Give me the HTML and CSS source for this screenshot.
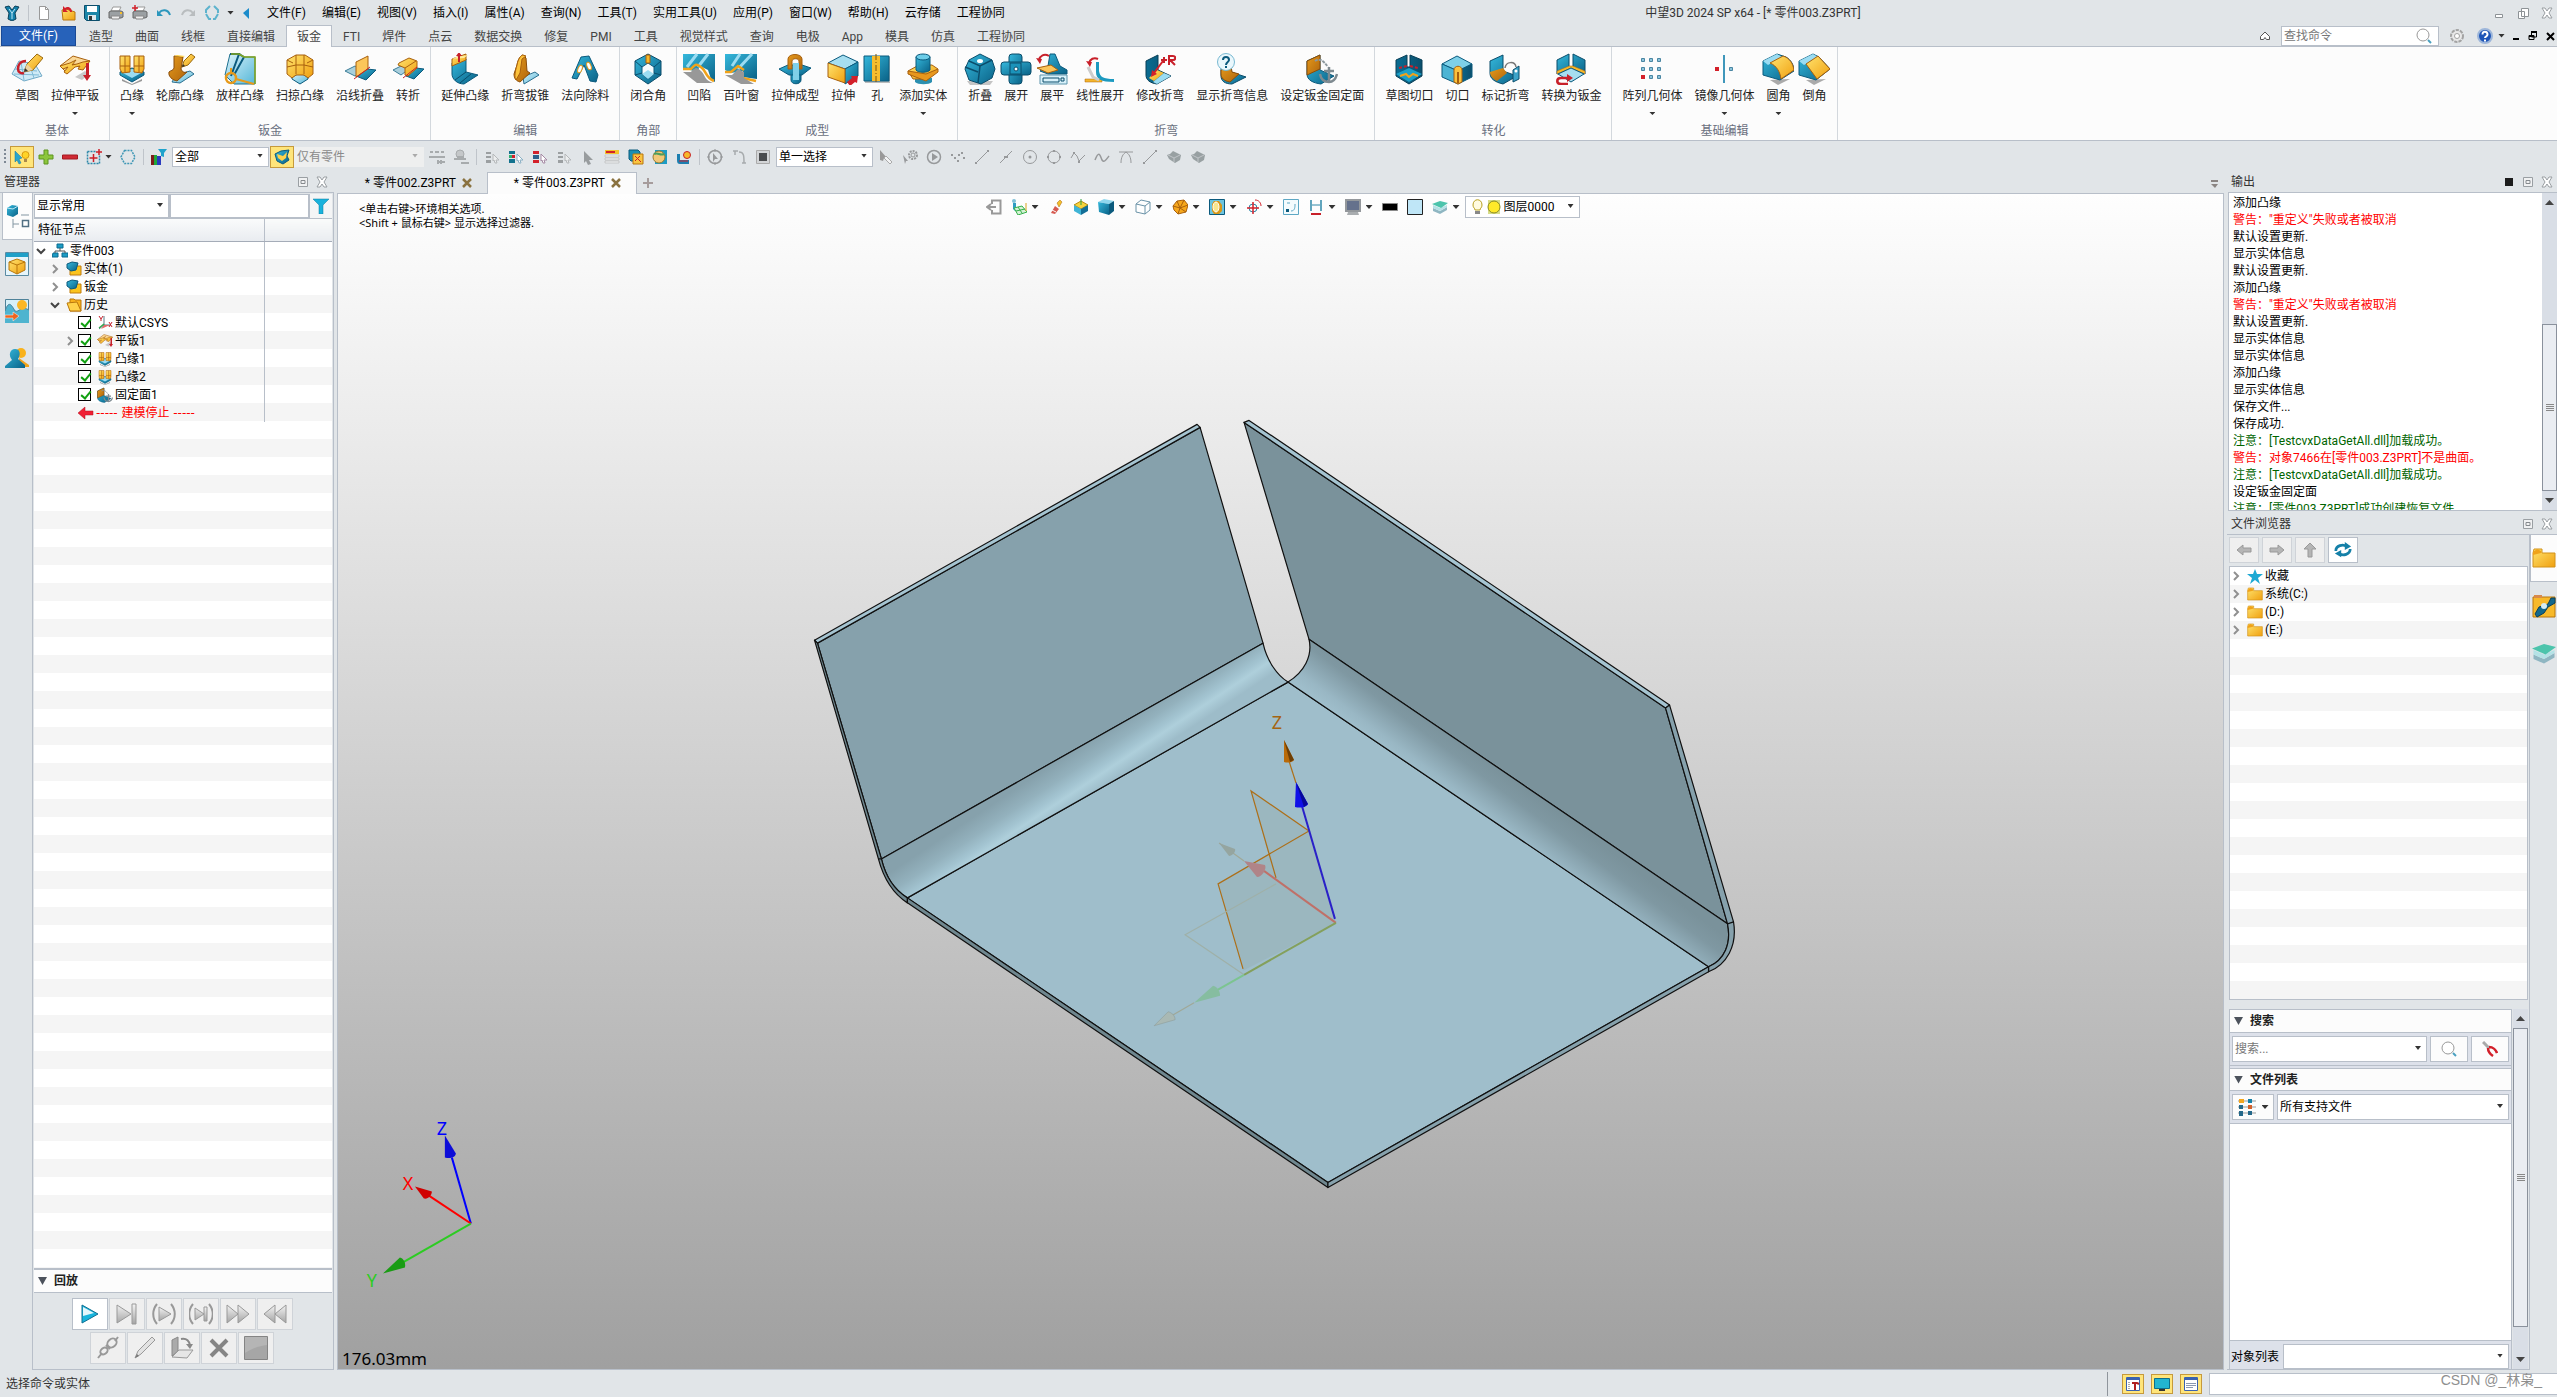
FILE: index.html
```
<!DOCTYPE html>
<html lang="zh-CN">
<head>
    <meta charset="UTF-8">
    <meta name="viewport" content="width=device-width, initial-scale=1.0">
    <title>中望3D 2024 SP x64</title>
    <link rel="stylesheet" href="styles.css">
</head>
<body>
    <!-- icon sprite -->
    <svg class="sprite" width="0" height="0" aria-hidden="true">
        <defs>
            <linearGradient id="gy" x1="0" y1="0" x2="1" y2="1"><stop offset="0" stop-color="#ffe36e"/><stop offset="1" stop-color="#f0a010"/></linearGradient>
            <linearGradient id="go" x1="0" y1="0" x2="1" y2="1"><stop offset="0" stop-color="#e59a1c"/><stop offset="1" stop-color="#b0650c"/></linearGradient>
            <linearGradient id="gb" x1="0" y1="0" x2="1" y2="1"><stop offset="0" stop-color="#35b8dc"/><stop offset="1" stop-color="#0a6287"/></linearGradient>
            <linearGradient id="gd" x1="0" y1="0" x2="1" y2="0"><stop offset="0" stop-color="#0a6c92"/><stop offset="1" stop-color="#0c4f6c"/></linearGradient>
            <linearGradient id="gl" x1="0" y1="0" x2="1" y2="1"><stop offset="0" stop-color="#dcf3fb"/><stop offset="1" stop-color="#55b7d8"/></linearGradient>
            <linearGradient id="gg" x1="0" y1="0" x2="0" y2="1"><stop offset="0" stop-color="#f4f4f4"/><stop offset="1" stop-color="#a4a4a4"/></linearGradient>
        </defs>

        <!-- ribbon icons, 32 units -->
        <symbol id="r-sketch" viewBox="0 0 32 32">
            <path d="M1 21 8 8l16 3 7 12-18 5z" fill="#cfeaf6" stroke="#6fa9c6"/>
            <path d="M4 16l22 2M3 21l25 1M10 9l3 18M18 10l5 15" stroke="#7fbad6" fill="none"/>
            <path d="M15 8c-6 0-8 4-8 8 0 3 3 5 6 4" fill="none" stroke="#c8202a" stroke-width="2.5"/>
            <path d="M13 19l3-8L26 1l6 4-10 12z" fill="url(#gy)" stroke="#9a6a10"/><path d="M13 19l3-8 6 6z" fill="#ecd2a0"/><path d="M13 19l1-4 3 3z" fill="#333"/>
        </symbol>
        <symbol id="r-plate" viewBox="0 0 32 32">
            <path d="M16 24l10-6 4 3-7 6z" fill="#c9c9c9"/>
            <path d="M1 13 14 3l17 5-7 7-4-1-5-3-8 8z" fill="#fbd896" stroke="#a8600e"/>
            <path d="M1 13l10-3 6-3-4 5 5-1 6-2 7-1-7 9-5-1 2-3-5 1-8 7-3-2 4-5-5 2z" fill="url(#gy)" stroke="#a8600e"/>
            <path d="M27 10h3v12h2l-4 6-4-6h3z" fill="#c8202a"/>
        </symbol>
        <symbol id="r-flange" viewBox="0 0 32 32">
            <path d="M6 26l10 5 10-5v2l-10 4-10-4z" fill="#999"/>
            <path d="M4 19l12-4 12 4v3l-12 7-12-7z" fill="url(#gb)" stroke="#0b5a7d"/><path d="M5 19l11-3 11 3-11 6z" fill="#9bdcf2"/>
            <path d="M4 3h10v16l-8 1-2-4z" fill="url(#gy)" stroke="#a8600e"/><path d="M18 3h10v13l-2 4-8-1z" fill="url(#gy)" stroke="#a8600e"/>
            <path d="M9 3v16M4 13h10M23 3v16M18 13h10" stroke="#a8600e" fill="none"/>
        </symbol>
        <symbol id="r-profile" viewBox="0 0 32 32">
            <path d="M12 22l14-4 4 3-14 9-8-1z" fill="url(#gl)" stroke="#2b6f8f"/>
            <path d="M10 3l9 1-2 12c1 3 4 4 6 3l-10 9c-5-1-9-5-8-9 2-2 4-1 5-4z" fill="url(#go)" stroke="#8a4d0a"/>
            <path d="M10 3l3-1 8 1-2 1z" fill="#ffd24a"/>
            <path d="M18 14l2-6 7-7 4 3-7 8z" fill="url(#gy)" stroke="#9a6a10"/><path d="M18 14l1-3 2 2z" fill="#333"/>
        </symbol>
        <symbol id="r-loft" viewBox="0 0 32 32">
            <path d="M6 1h9l5 3h11v27H10L1 22z" fill="url(#gl)" stroke="#1d7090"/><path d="M6 1l9 0-8 22M20 4 10 22M15 1l5 3" fill="none" stroke="#0b5a7d" stroke-width="2"/>
            <path d="M7 1h8l5 3h11v27" fill="none" stroke="#86a81e" stroke-width="1.5"/>
            <circle cx="7" cy="25" r="5" fill="none" stroke="#e79a1a" stroke-width="2.5"/><path d="M7 19v-4M12 26l18 5" stroke="#e79a1a" stroke-width="2"/>
        </symbol>
        <symbol id="r-sweep" viewBox="0 0 32 32">
            <path d="M8 24l8-4 8 4v2l-8 5-8-5z" fill="url(#gl)" stroke="#0b5a7d"/>
            <path d="M3 7l9-5h9l8 5v14l-5 4-4-3h-8l-4 3-5-4z" fill="url(#gy)" stroke="#a8600e"/>
            <path d="M12 2v19M20 2v19M3 14l9-2h8l9 2M3 7l6 3M29 7l-6 3" stroke="#a8600e" fill="none"/>
        </symbol>
        <symbol id="r-linefold" viewBox="0 0 32 32">
            <path d="M1 18l10-5 8 4-8 6z" fill="#a9cfdc" stroke="#3c7e99"/><path d="M12 23l11-7 9 1-10 10z" fill="url(#gb)" stroke="#0b5a7d"/>
            <path d="M12 9l12-6v13l-12 8z" fill="#fcc65a" stroke="#a8600e"/><path d="M10 26l16-12" stroke="#c8202a"/>
        </symbol>
        <symbol id="r-jog" viewBox="0 0 32 32">
            <path d="M1 17l10-5 6 4-8 6z" fill="#a9cfdc" stroke="#3c7e99"/><path d="M14 23l10-8 8 1-10 10z" fill="url(#gb)" stroke="#0b5a7d"/>
            <path d="M7 10l10-5 8 3v7l-9 8-3-1v-7l-7-3z" fill="url(#gy)" stroke="#a8600e"/><path d="M13 15l11-7" stroke="#a8600e"/><path d="M11 25l14-11" stroke="#c8202a"/>
        </symbol>
        <symbol id="r-extend" viewBox="0 0 32 32">
            <path d="M3 10l14-4v13l12 3-14 9c-7 0-12-5-12-10z" fill="url(#gb)" stroke="#0b5a7d"/>
            <path d="M3 6l14-5v6L3 13z" fill="url(#gy)" stroke="#a8600e"/><path d="M3 6l4-2 12-2-4 3z" fill="#ffe99a"/><path d="M9 9V3H7l3-4 3 4h-2v6z" fill="#c8202a"/><path d="M17 19 6 27M22 21l-11 9" stroke="#0b4d6b" fill="none"/>
        </symbol>
        <symbol id="r-taper" viewBox="0 0 32 32">
            <path d="M14 24l12-5 4 3-15 9z" fill="url(#gl)" stroke="#2b6f8f"/>
            <path d="M8 12c1-6 4-10 6-10l3 3 1 13 3 2-10 9c-4-1-6-4-6-8z" fill="url(#go)" stroke="#8a4d0a"/><path d="M8 12c1-6 4-10 6-10l3 1-4 3-2 14-4 7c-2-3-1-8 1-15z" fill="#fcc23c" stroke="#a8600e"/>
        </symbol>
        <symbol id="r-normal" viewBox="0 0 32 32">
            <path d="M3 25 12 4l8-1 9 19-2 7-6-1-6-16-7 14z" fill="url(#gb)" stroke="#0b5a7d"/><ellipse cx="11" cy="16" rx="2" ry="4" transform="rotate(20 11 16)" fill="#fff" stroke="#e79a1a"/><ellipse cx="20" cy="13" rx="2" ry="4" transform="rotate(-20 20 13)" fill="#fff" stroke="#e79a1a"/>
        </symbol>
        <symbol id="r-corner" viewBox="0 0 32 32">
            <path d="M16 1l13 7v14l-13 9L3 22V8z" fill="url(#gb)" stroke="#0b4d6b"/><path d="M16 10l6 4v7l-6 5-6-5v-7z" fill="#f5fbfd" stroke="#0b5a7d"/>
            <path d="M10 21l6-4 6 4-6 5z" fill="#9bdcf2"/><path d="M3 22l7-2M29 22l-7-2M3 8l7 6M29 8l-7 6" stroke="#0b4d6b"/><path d="M14 2h4v8h-4z" fill="#f7b92a" stroke="#a8600e"/>
        </symbol>
        <symbol id="r-dimple" viewBox="0 0 32 32">
            <path d="M0 1h32v28l-4-3-3-9-8-4-3 6-14-4z" fill="url(#gb)"/><path d="M14 1 4 14M25 1 15 14" stroke="#9bdcf2" stroke-width="3"/>
            <path d="M0 16l8 0c5-6 6-5 11-1 5 4 3 9 12 13" fill="none" stroke="#f0a21a" stroke-width="2.5"/><path d="M0 19l8 0c5-6 6-4 10-1 5 5 3 9 12 12H14z" fill="#989898"/>
        </symbol>
        <symbol id="r-louver" viewBox="0 0 32 32">
            <path d="M0 1h32v25l-14-2 0-6-12 2-6-3z" fill="url(#gb)"/><path d="M15 1 7 13M27 1 13 16" stroke="#9bdcf2" stroke-width="3"/>
            <path d="M0 19h6l7-6 6 4M18 25l13 3" fill="none" stroke="#f0a21a" stroke-width="2.5"/><path d="M0 22h7l6-6 6 3v6l10 6H16z" fill="#989898"/>
        </symbol>
        <symbol id="r-form" viewBox="0 0 32 32">
            <path d="M12 14h10v13c0 5-10 5-10 0z" fill="url(#gb)" stroke="#0b5a7d"/><path d="M0 16l9-4h14l9 3-9 7H10z" fill="url(#gb)" stroke="#0b5a7d"/>
            <path d="M9 16V6c0-6 14-6 14 0v10h-3V8c0-3-7-3-7 0v8z" fill="url(#go)" stroke="#a8600e"/><path d="M14 10h6v17h-6z" fill="#7fd0e8"/>
        </symbol>
        <symbol id="r-extrude" viewBox="0 0 32 32">
            <path d="M16 2l15 7-13 7L1 10z" fill="#a6def0" stroke="#0b5a7d"/><path d="M18 16l13-7v14l-13 8z" fill="url(#gb)" stroke="#0b5a7d"/><path d="M1 10l17 6v14L1 24z" fill="url(#gy)" stroke="#a8600e"/><path d="M20 29l5-4-1-2 7 0-1 7-2-1-5 4z" fill="#d3202a"/>
        </symbol>
        <symbol id="r-hole" viewBox="0 0 32 32">
            <path d="M4 4h25v26H4z" fill="#bdbdbd"/><path d="M3 3h25v25H3z" fill="url(#gb)" stroke="#0b5a7d"/><path d="M11 3h8v25h-8z" fill="#f7bd2e"/><path d="M15 1v30" stroke="#7a5208" stroke-dasharray="6 2 1 2"/>
        </symbol>
        <symbol id="r-addbody" viewBox="0 0 32 32">
            <path d="M8 26v3c3 3 14 3 17 0v-4z" fill="#2b8fb0"/><path d="M1 18l11-6h13l6 4-12 10H6z" fill="url(#gy)" stroke="#a8600e"/><path d="M1 18l18 3 12-5v3L19 28 1 21z" fill="#e8971c" stroke="#a8600e"/>
            <path d="M9 4v13c2 3 12 3 14 0V4z" fill="url(#gb)" stroke="#0b5a7d"/><ellipse cx="16" cy="4" rx="7" ry="3" fill="#6ccde8" stroke="#0b5a7d"/>
        </symbol>
        <symbol id="r-fold" viewBox="0 0 32 32">
            <path d="M3 28h26l-3 4H6z" fill="#c4c4c4"/><path d="M16 1l12 6 3 9-3 9-11 6-12-4-4-11 4-9z" fill="url(#gb)" stroke="#0b4d6b"/><path d="M5 8l11 5 12-6M16 13l-2 17M1 14l13 5" fill="none" stroke="#0b4d6b" stroke-width="1.5"/><ellipse cx="16" cy="8" rx="3" ry="2" fill="#fff"/>
        </symbol>
        <symbol id="r-unfold" viewBox="0 0 32 32">
            <rect x="9" y="1" width="13" height="30" rx="3" fill="url(#gb)" stroke="#0b4d6b"/><rect x="1" y="9" width="30" height="13" rx="3" fill="url(#gb)" stroke="#0b4d6b"/><rect x="10" y="10" width="11" height="11" fill="#1b93ba" stroke="#0b4d6b"/><circle cx="16" cy="16" r="2" fill="#fff" stroke="#0b4d6b"/>
        </symbol>
        <symbol id="r-flat" viewBox="0 0 32 32">
            <path d="M14 1h5l5 12 7 4v4H12l-8-3 8-5z" fill="url(#gb)" stroke="#0b5a7d"/><path d="M1 15l14-3 7 5-10 3z" fill="#fcc65a" stroke="#a8600e"/><path d="M13 3C8 0 4 3 3 7" fill="none" stroke="#c8202a" stroke-width="2"/><path d="M0 5l6 1-2 5z" fill="#c8202a"/>
            <path d="M4 22h27v9H4z" fill="#d8f1fa" stroke="#5d94ac"/><path d="M7 25h16v4H7zM25 25h3v3h-3z" fill="none" stroke="#0b4d6b"/>
        </symbol>
        <symbol id="r-linear" viewBox="0 0 32 32">
            <path d="M1 26h17v3H1z" fill="#f5b62c" stroke="#a8600e" stroke-width=".5"/><path d="M15 9v9c1 6 4 8 15 8v3c-13 0-18-3-18-10V9z" fill="#1c9ac0"/><path d="M4 14l5 10 6 3" fill="none" stroke="#ccc" stroke-width="3"/><path d="M14 6C10 4 6 6 5 10" fill="none" stroke="#c8202a" stroke-width="2"/><path d="M2 8l6 1-2 5z" fill="#c8202a"/>
        </symbol>
        <symbol id="r-modbend" viewBox="0 0 32 32">
            <path d="M2 8l12-6v15l13 6-14 8c-7-1-11-4-11-9z" fill="url(#gd)" stroke="#083e56"/><path d="M13 17l7 3-10 8-5-3z" fill="url(#gy)"/><path d="M20 20l7 3-14 8-4-2z" fill="#9bdcf2"/><path d="M19 8l-9 12" stroke="#d3202a" stroke-width="2"/><path d="M7 24l1-7 5 4z" fill="#d3202a"/>
            <path d="M17 7h6M20 4v6M25 12V3h4c3 0 3 4 0 4h-3l5 5" fill="none" stroke="#c8202a" stroke-width="2"/>
        </symbol>
        <symbol id="r-info" viewBox="0 0 32 32">
            <path d="M5 14l10-2v7l15 5-14 7c-7 0-11-3-11-8z" fill="url(#gb)" stroke="#0b4d6b"/><path d="M5 17l10-4 1 6 7 2-9 8c-6-1-9-4-9-8z" fill="url(#go)" stroke="#8a4d0a"/>
            <circle cx="10" cy="9" r="8.500" fill="#eaf7fc" stroke="#79b9d2"/><path d="M7 7c0-4 6-4 6 0 0 2-3 2-3 5M10 13v2" fill="none" stroke="#0b5a7d" stroke-width="2"/>
        </symbol>
        <symbol id="r-anchor" viewBox="0 0 32 32">
            <path d="M1 8l13-6v15l14 6-13 8C7 30 1 27 1 21z" fill="url(#gb)" stroke="#0b5a7d"/><path d="M1 8l13-6v14L1 22z" fill="url(#go)" stroke="#8a4d0a"/>
            <path d="M9 8c4-3 8-1 13 6" fill="none" stroke="#8c989e" stroke-width="2" stroke-dasharray="3 1"/><path d="M23 14v14M18 18h10M14 21c1 6 4 8 9 8s7-4 8-8" fill="none" stroke="#7e8a90" stroke-width="2.500"/>
        </symbol>
        <symbol id="r-skcut" viewBox="0 0 32 32">
            <path d="M3 7l11-5v12h3V2l12 5v16l-13 8-13-8z" fill="url(#gd)" stroke="#083e56"/><path d="M3 21l13-6 13 6-13 8z" fill="#1ba0c8"/><path d="M6 15l8-2M17 13l8 2" stroke="#c8202a" stroke-width="2" stroke-dasharray="3 2"/><path d="M7 23l6-2 3 3 4-3 5 2" fill="none" stroke="#f0a21a" stroke-width="2"/>
        </symbol>
        <symbol id="r-cut" viewBox="0 0 32 32">
            <path d="M16 3l15 8-14 7L1 11z" fill="#7ed0e8" stroke="#0b5a7d"/><path d="M1 11l16 7v13L1 24z" fill="#4cb4d4" stroke="#0b5a7d"/><path d="M17 18l14-7v13l-14 7z" fill="url(#gd)" stroke="#0b5a7d"/><path d="M13 29V17c0-5 8-5 8 0v12l-4 2z" fill="#fcc23c" stroke="#a8600e"/><path d="M17 19v11" stroke="#a8600e" stroke-width="2"/>
        </symbol>
        <symbol id="r-mark" viewBox="0 0 32 32">
            <path d="M1 8l13-6v16l14 5-14 8C6 29 1 26 1 20z" fill="url(#gb)" stroke="#0b4d6b"/><path d="M1 19l13-4 4 5-10 8c-4-2-7-5-7-9z" fill="url(#go)"/><path d="M16 15c1-7 10-7 11-1" fill="none" stroke="#777" stroke-width="1.500"/><path d="M24 17l6-4v13l-6 3z" fill="#3da3c8" stroke="#0b4d6b"/><circle cx="27" cy="18" r="1.500" fill="#fff"/>
        </symbol>
        <symbol id="r-convert" viewBox="0 0 32 32">
            <path d="M2 7l12-6v14L2 21zM18 1l12 6v14l-12-6z" fill="url(#gb)" stroke="#0b4d6b"/><path d="M2 18l12-5h4l12 5v3l-14-6-14 6z" fill="#f7b92a" stroke="#a8600e" stroke-width=".5"/><path d="M3 21l13-6 13 6-13 8z" fill="#a6def0" stroke="#0b5a7d"/>
            <path d="M13 31H6c-5 0-5-6 0-6h7" fill="none" stroke="#c8202a" stroke-width="2.500"/><path d="M12 21l6 4-6 4z" fill="#c8202a"/>
        </symbol>
        <symbol id="r-array" viewBox="0 0 32 32">
            <g fill="#8cc4dc" stroke="#4a86a2"><path d="M5.500 5.500h3v3h-3zM13.500 5.500h3v3h-3zM21.500 5.500h3v3h-3zM5.500 14.500h3v3h-3zM13.500 14.500h3v3h-3zM21.500 14.500h3v3h-3zM13.500 22.500h3v3h-3zM21.500 22.500h3v3h-3z"/></g><path d="M5 22h4v4H5z" fill="#d3202a"/>
        </symbol>
        <symbol id="r-mirror" viewBox="0 0 32 32">
            <path d="M16 2v28" stroke="#3f97bb" stroke-width="2"/><path d="M7 14h4v4H7z" fill="#d3202a"/><path d="M21.500 14.500h3v3h-3z" fill="#8cc4dc" stroke="#4a86a2"/>
        </symbol>
        <symbol id="r-fillet" viewBox="0 0 32 32">
            <path d="M8 27l8 5 12-6z" fill="#aaa"/><path d="M1 8l14-7 9 3c5 3 8 8 8 14l-14 9L1 22z" fill="url(#gb)" stroke="#0b5a7d"/><path d="M15 1 1 8l5 4 14-8z" fill="#9bdcf2"/><path d="M8 10l13-7c7 2 10 8 11 14l-13 9C18 19 15 13 8 10z" fill="url(#gy)" stroke="#a8600e"/>
        </symbol>
        <symbol id="r-chamfer" viewBox="0 0 32 32">
            <path d="M8 27l8 5 12-6z" fill="#aaa"/><path d="M1 8l14-7 6 3 11 12-14 11L1 22z" fill="url(#gb)" stroke="#0b5a7d"/><path d="M15 1 1 8l5 4 14-8z" fill="#9bdcf2"/><path d="M8 11l12-8 12 13-13 10z" fill="url(#gy)" stroke="#a8600e"/>
        </symbol>

        <!-- small icons, 16 units -->
        <symbol id="s-logo" viewBox="0 0 16 16"><path d="M1 2l4-1 3 4 3-4 4 1-4 6 1 6-4 2-4-2 1-6z" fill="#1380ab" stroke="#0a3f58"/><path d="M5 4l3 4 3-4M8 8v6" stroke="#bfe9f7" fill="none"/></symbol>
        <symbol id="s-new" viewBox="0 0 16 16"><path d="M3.500 1.500h6l3 3v10h-9z" fill="#fff" stroke="#999"/><path d="M9.500 1.500v3h3" fill="none" stroke="#999"/></symbol>
        <symbol id="s-open" viewBox="0 0 16 16"><path d="M2 5l4-1 9 3v8H3z" fill="url(#gy)" stroke="#b9770c"/><path d="M12 7c0-5-5-6-7-4l-2-2v6h5L6 5c2-1 4 0 4 2z" fill="#d3202a"/></symbol>
        <symbol id="s-save" viewBox="0 0 16 16"><path d="M.5.5h15v15h-13l-2-2z" fill="#1c86a8" stroke="#0b4d6b"/><path d="M3 1h10v6H3z" fill="#fff"/><path d="M4 10h8v5H4z" fill="#dfe8ec"/><path d="M5 11h3v4H5z" fill="#333"/></symbol>
        <symbol id="s-print" viewBox="0 0 16 16"><path d="M5 2h8l-2 4H3z" fill="#fff" stroke="#999"/><path d="M1 7l2-1h10l2 1v5l-2 1H1z" fill="#9ba0a3" stroke="#666"/><path d="M3 11h9l-1 3H4z" fill="#eee" stroke="#888"/><path d="M12 8h2" stroke="#f7c02e" stroke-width="2"/></symbol>
        <symbol id="s-printp" viewBox="0 0 16 16"><path d="M5 2h8l-2 4H3z" fill="#fff" stroke="#999"/><path d="M1 7l2-1h10l2 1v5l-2 1H1z" fill="#9ba0a3" stroke="#666"/><path d="M3 11h9l-1 3H4z" fill="#eee" stroke="#888"/><path d="M3 0v6M0 3h6" stroke="#d3202a" stroke-width="1.500"/></symbol>
        <symbol id="s-undo" viewBox="0 0 16 16"><path d="M3 8c3-4 9-4 11 2" fill="none" stroke="#2c97bd" stroke-width="2"/><path d="M1 5v6h6z" fill="#2c97bd"/></symbol>
        <symbol id="s-redo" viewBox="0 0 16 16"><path d="M13 8C10 4 4 4 2 10" fill="none" stroke="#b9bdbf" stroke-width="2"/><path d="M15 5v6H9z" fill="#b9bdbf"/></symbol>
        <symbol id="s-regen" viewBox="0 0 16 16"><path d="M6 1 2 5v3M10 1l4 4v3M2 9l3 5h2M14 9l-3 5H9" fill="none" stroke="#5db3cd" stroke-width="2"/></symbol>
        <symbol id="s-left" viewBox="0 0 16 16"><path d="M11 3v11L5 8z" fill="#1c8ccb"/></symbol>
        <symbol id="s-bulb" viewBox="0 0 16 16"><path d="M1 2l7 7-3 1 2 4-2 1-2-4-2 2z" fill="#27a5cc" stroke="#1374a0" stroke-width=".5"/><circle cx="11.500" cy="6" r="3.500" fill="#ffd426" stroke="#d99b10"/><path d="M10 10h3v3h-3z" fill="#a9884a"/></symbol>
        <symbol id="s-plus" viewBox="0 0 16 16"><path d="M6 1h4v5h5v4h-5v5H6v-5H1V6h5z" fill="#8cc63c" stroke="#5c9420"/></symbol>
        <symbol id="s-minus" viewBox="0 0 16 16"><path d="M.5 6h15v4H.5z" fill="#d02a34" stroke="#a31a22"/></symbol>
        <symbol id="s-pick" viewBox="0 0 16 16"><path d="M1.500 2.500h9M1.500 2.500v12h12v-9" fill="none" stroke="#2e88a8" stroke-width="1.500" stroke-dasharray="2 1"/><path d="M7.500 5v8M3.500 9h8M13 0v6M10 3h6" stroke="#cc1f28" stroke-width="1.500"/></symbol>
        <symbol id="s-hex" viewBox="0 0 16 16"><path d="M4.500 1.500h7L15 8l-3.500 6.500h-7L1 8z" fill="none" stroke="#3f97b5" stroke-width="1.500" stroke-dasharray="2 1"/></symbol>
        <symbol id="s-filter" viewBox="0 0 16 16"><path d="M0 6h3v10H0z" fill="#7d1c1c"/><path d="M3 6h3v10H3z" fill="#20a83a"/><path d="M6 7h4v9H6z" fill="#2a3bbf"/><path d="M7 0h9l-3 4v4l-3-1V4z" fill="#1fa3cc"/></symbol>
        <symbol id="s-part" viewBox="0 0 16 16"><path d="M1 5l6-3 8-1-2 6 2 4-6 4-6-3z" fill="url(#gb)" stroke="#0b5a7d"/><path d="M3 5l6 2 4-4-1 6-4 3-4-3z" fill="#ffd24a"/></symbol>
        <symbol id="s-links" viewBox="0 0 16 16"><path d="M1 3h3M6 3h4M12 3h3M0 8h16M8 13h8M9 11v4M12 11v4" stroke="#a7abad" stroke-width="2" fill="none"/></symbol>
        <symbol id="s-stamp" viewBox="0 0 16 16"><circle cx="7" cy="5" r="4" fill="#c4c7c9" stroke="#a7abad"/><path d="M1 10h12M8 14h8M4 8h7" stroke="#a7abad" stroke-width="2"/></symbol>
        <symbol id="s-lista" viewBox="0 0 16 16"><path d="M2 3h5v2H2zM2 7h5v2H2zM2 11h5v3H2z" fill="#9b9fa1"/><path d="M9 5l6 6-3 0 1 3-2 0-1-3-1 1z" fill="#eceeef" stroke="#b5b8ba"/></symbol>
        <symbol id="s-listb" viewBox="0 0 16 16"><path d="M1 2h6v3H1zM1 10h6v4H1z" fill="#12728e"/><path d="M4 6h3v3H4z" fill="#d3202a"/><path d="M1 6h3v3H1z" fill="#30b070"/><path d="M9 5l6 6-3 0 1 3-2 0-1-3-1 1z" fill="#fff" stroke="#8ab0c4"/></symbol>
        <symbol id="s-listc" viewBox="0 0 16 16"><path d="M1 2h6v3H1zM1 11h6v3H1z" fill="#d3202a"/><path d="M1 6h6v4H1z" fill="#2d5f8a"/><path d="M9 5l6 6-3 0 1 3-2 0-1-3-1 1z" fill="#fff" stroke="#a58aa4"/></symbol>
        <symbol id="s-cursor" viewBox="0 0 16 16"><path d="M4 2l9 9-4 0 2 4-3 1-2-4-2 2z" fill="#989c9e"/></symbol>
        <symbol id="s-layers" viewBox="0 0 16 16"><path d="M1 1h14v4H1z" fill="#f4c22c"/><path d="M2 3h9" stroke="#d3202a" stroke-width="2"/><path d="M1 6h14v2H1zM1 9h14v2H1zM1 12h14v2H1z" fill="#eceeef" stroke="#aaa" stroke-width=".5"/></symbol>
        <symbol id="s-boxes" viewBox="0 0 16 16"><path d="M1 1h9l2 2v9H3l-2-2z" fill="#1c8fb2" stroke="#0b5a7d"/><path d="M5 5h10v10H5z" fill="#f9c440" stroke="#b9770c"/><path d="M7 7l6 6M12 7l-5 5" stroke="#c8202a"/></symbol>
        <symbol id="s-globe" viewBox="0 0 16 16"><path d="M3 1h12v14H3z" fill="#1c9cc4"/><circle cx="7" cy="8" r="6" fill="#f2c878" stroke="#9a7a30"/><path d="M2 5c4-2 6 2 10 0" stroke="#4b9d5c" stroke-width="2" fill="none"/></symbol>
        <symbol id="s-bendset" viewBox="0 0 16 16"><path d="M1 5h3v6h9v4H4c-2 0-3-1-3-4z" fill="#1c7fb0"/><circle cx="11" cy="6" r="3.500" fill="#f7b92a" stroke="#c8202a"/><path d="M3 12h9" stroke="#d3202a"/></symbol>
        <symbol id="s-target" viewBox="0 0 16 16"><circle cx="8" cy="8" r="6.500" fill="none" stroke="#97999b" stroke-width="1.500"/><path d="M8 0v3M8 13v3M0 8h3M13 8h3" stroke="#97999b"/><path d="M6 4l5 6H8l-2 3z" fill="#97999b"/></symbol>
        <symbol id="s-snap" viewBox="0 0 16 16"><path d="M2 2h5M4 2v4M8 3c5 0 5 4 5 11M11 14h4" fill="none" stroke="#a7abad" stroke-width="1.500"/></symbol>
        <symbol id="s-square" viewBox="0 0 16 16"><path d="M1.500 1.500h13v13h-13z" fill="#d3d5d7" stroke="#aaa"/><path d="M4 4h8v8H4z" fill="#4a4c4e"/></symbol>
        <symbol id="s-erase" viewBox="0 0 16 16"><path d="M2 1l7 8-3 0-1 3-3-1z" fill="#999"/><path d="M8 7l6 6-2 2-6-6z" fill="#f2f3f4" stroke="#aaa"/></symbol>
        <symbol id="s-gear" viewBox="0 0 16 16"><circle cx="11" cy="6" r="4" fill="none" stroke="#97999b" stroke-width="2" stroke-dasharray="2 1"/><circle cx="11" cy="6" r="2" fill="none" stroke="#97999b"/><path d="M1 6l5 6H4l-1 3z" fill="#97999b"/></symbol>
        <symbol id="s-play" viewBox="0 0 16 16"><circle cx="8" cy="8" r="6.500" fill="none" stroke="#97999b" stroke-width="1.500"/><path d="M6 4l6 4-6 4z" fill="#97999b"/></symbol>
        <symbol id="s-dots" viewBox="0 0 16 16"><path d="M1 6h2M4 9h2M8 6h2M7 12h2M11 4h2M13 9h2" stroke="#97999b" stroke-width="2"/></symbol>
        <symbol id="s-line" viewBox="0 0 16 16"><path d="M2 14 14 2" stroke="#97999b"/><path d="M1 13h2v2H1zM13 1h2v2h-2z" fill="#97999b"/></symbol>
        <symbol id="s-line2" viewBox="0 0 16 16"><path d="M2 14 14 2" stroke="#97999b"/><path d="M6 7h4v2H6z" fill="#97999b"/></symbol>
        <symbol id="s-circdot" viewBox="0 0 16 16"><circle cx="8" cy="8" r="6.500" fill="none" stroke="#97999b"/><circle cx="8" cy="8" r="1.500" fill="#97999b"/></symbol>
        <symbol id="s-circ" viewBox="0 0 16 16"><circle cx="8" cy="8" r="6" fill="none" stroke="#97999b"/><path d="M7 1h2v2H7zM7 13h2v2H7zM1 7h2v2H1zM13 7h2v2h-2z" fill="#97999b"/></symbol>
        <symbol id="s-wave" viewBox="0 0 16 16"><path d="M1 9l3-5 3 3 2 5 3-3 3-3" fill="none" stroke="#97999b"/><path d="M3 3h2v2H3zM8 12h2v2H8z" fill="#97999b"/></symbol>
        <symbol id="s-wave2" viewBox="0 0 16 16"><path d="M1 11c4-10 5-5 7 0 2 3 4 0 7-4" fill="none" stroke="#97999b" stroke-width="1.500"/></symbol>
        <symbol id="s-arc" viewBox="0 0 16 16"><path d="M1 3h14M3 14c0-6 2-9 5-11 3 2 5 5 5 11" fill="none" stroke="#97999b"/></symbol>
        <symbol id="s-cube3" viewBox="0 0 16 16"><path d="M1 6l3-1 3-3 4 2 4 2-1 5-5 3-6-4z" fill="#98a0a2"/><path d="M2 6l6 3 6-3M8 9v4" stroke="#c0c5c8" fill="none"/></symbol>

        <symbol id="s-exit" viewBox="0 0 16 16"><path d="M6 5V1.500h8.500v13H6V11" fill="none" stroke="#999" stroke-width="2"/><path d="M10 8H2M5 5 1 8l4 3" fill="none" stroke="#999" stroke-width="2"/></symbol>
        <symbol id="s-csgrid" viewBox="0 0 16 16"><circle cx="3" cy="2" r="2" fill="#7fc0d8"/><path d="M2 4h3v6l2 2-3 0-2-2z" fill="#2e9dc2"/><path d="M3 9l8-2 5 6-9 3z" fill="#d6f2d6" stroke="#34b04a"/><path d="M5 12l9-2M7 8l4 6" stroke="#34b04a"/><path d="M15 4v8" stroke="#d9a520"/></symbol>
        <symbol id="s-brush" viewBox="0 0 16 16"><path d="M9 4l3-3 2 2-3 5z" fill="#f4c22c" stroke="#a8600e" stroke-width=".5"/><path d="M7 7l4 3-4 5-4-1z" fill="#d65a50"/><path d="M4 11l4 2" stroke="#fff"/></symbol>
        <symbol id="s-block" viewBox="0 0 16 16"><path d="M8 2l7 4-7 4-7-4z" fill="#f6d33c" stroke="#b98a10"/><path d="M1 6l7 4v6l-7-4z" fill="#3fb4d6"/><path d="M8 10l7-4v6l-7 4z" fill="#136f97"/><path d="M8 0v6" stroke="#30a040"/></symbol>
        <symbol id="s-cube" viewBox="0 0 16 16"><path d="M6 0l10 2-5 3L0 3z" fill="#8fd7ee"/><path d="M0 3l11 2v11L1 13z" fill="url(#gb)"/><path d="M11 5l5-3v10l-5 4z" fill="#0b5a7d"/></symbol>
        <symbol id="s-wire" viewBox="0 0 16 16"><path d="M6 1l9 2v8l-5 4-9-2V5zM1 5l9 2 5-4M10 7v8" fill="#fff" stroke="#6b93a8"/></symbol>
        <symbol id="s-poly" viewBox="0 0 16 16"><path d="M1 7l4-5 7-1 4 5-2 7-8 2-4-4z" fill="#f7a81c" stroke="#a8600e"/><path d="M1 7l7 2 8-3M8 9l4-8M8 9l-2 6M8 9l6 4M5 2l3 7" stroke="#a8600e" fill="none"/></symbol>
        <symbol id="s-section" viewBox="0 0 16 16"><path d="M.5.5h15v15H.5z" fill="#6cc4e0" stroke="#0b5a7d"/><path d="M5 2h5l3 4v6l-3 3H5l-2-3V5z" fill="#d99818"/><ellipse cx="7" cy="8" rx="3" ry="5" fill="#f9e68e" stroke="#fff"/></symbol>
        <symbol id="s-snapax" viewBox="0 0 16 16"><circle cx="7" cy="9" r="4" fill="none" stroke="#2e88a8"/><path d="M7 3v12M1 9h12" stroke="#d3202a" stroke-width="1.500"/><path d="M9 1c4 0 6 3 6 6" fill="none" stroke="#d3202a"/></symbol>
        <symbol id="s-view" viewBox="0 0 16 16"><path d="M.5.5h15v15H.5z" fill="#f4fbfd" stroke="#5da7c4"/><path d="M3 10h3v3H3z" fill="#0b5a7d"/><path d="M8 12c4 0 4-4 4-7M4 4h3" fill="none" stroke="#5da7c4"/></symbol>
        <symbol id="s-dim" viewBox="0 0 16 16"><path d="M3 1v11M13 1v11" stroke="#2e88a8" stroke-width="1.500"/><path d="M4 6h8" stroke="#2e88a8"/><path d="M3 15h10" stroke="#c8202a" stroke-width="2"/></symbol>
        <symbol id="s-monitor" viewBox="0 0 16 16"><path d="M0 0h16v13H0z" fill="#94989c"/><path d="M2 2h12v9H2z" fill="#65718c"/><path d="M3 13h10l1 3H2z" fill="#a9adb0"/></symbol>
        <symbol id="s-black" viewBox="0 0 16 16"><path d="M.5 4.500h15v7H.5z" fill="#000" stroke="#888"/></symbol>
        <symbol id="s-blue" viewBox="0 0 16 16"><path d="M.5.5h15v15H.5z" fill="#bfe6f7" stroke="#222"/></symbol>
        <symbol id="s-stack" viewBox="0 0 16 16"><path d="M1 9l7 3 7-4v3l-7 4-7-3z" fill="#8fb6c2"/><path d="M1 6l7 3 7-3v2l-7 4-7-3z" fill="#b4e2e6"/><path d="M0 5l8-3 8 2-7 5z" fill="#4cc4ac"/></symbol>

        <symbol id="s-pin" viewBox="0 0 12 12"><path d="M1.500 1.500h9v9h-9z" fill="#f0f1f2" stroke="#9a9fa3"/><path d="M4 4.500h4v3H4z" fill="none" stroke="#85898d"/></symbol>
        <symbol id="s-close" viewBox="0 0 12 12"><path d="M1 1h3l2 3 2-3h3L8 6l3 5H8L6 8l-2 3H1l3-5z" fill="#fff" stroke="#9a9fa3"/></symbol>
        <symbol id="s-right" viewBox="0 0 10 10"><path d="M3 1l4 4-4 4" fill="none" stroke="#909090" stroke-width="2"/></symbol>
        <symbol id="s-down" viewBox="0 0 10 10"><path d="M1 3l4 4 4-4" fill="none" stroke="#444" stroke-width="2"/></symbol>
        <symbol id="s-tab-x" viewBox="0 0 12 12"><path d="M2 2l8 8M10 2l-8 8" stroke="#8a7240" stroke-width="2.500"/></symbol>
        <symbol id="s-funnel" viewBox="0 0 16 16"><path d="M0 1h16l-6 6v9H6V7z" fill="#19b2dc" stroke="#0d7ca0" stroke-width=".5"/></symbol>
        <symbol id="s-lens" viewBox="0 0 16 16"><circle cx="7" cy="7" r="6" fill="#fff" stroke="#999"/><path d="M12 12l3 3" stroke="#4aa0c0" stroke-width="2"/></symbol>
        <symbol id="s-assy" viewBox="0 0 16 16"><path d="M5 1h6v4H5zM1 10h5v4H0zM10 10h6v4h-6z" fill="#1c9cc4" stroke="#0b6a90"/><path d="M8 5v3M3 10V8h10v2" fill="none" stroke="#555"/></symbol>
        <symbol id="s-solid" viewBox="0 0 16 16"><path d="M4 5h11v9H4z" fill="#fbc41e" stroke="#c07d10"/><path d="M1 3l5-2 6 1-2 7-5 1-4-3z" fill="url(#gb)" stroke="#0b5a7d"/></symbol>
        <symbol id="s-hist" viewBox="0 0 16 16"><path d="M4 4V2h4l1 1h6v11H4z" fill="#f9b21c" stroke="#b9770c"/><path d="M1 6l10-1 4 9H4z" fill="#ffd24a" stroke="#b9770c"/></symbol>
        <symbol id="s-csys" viewBox="0 0 16 16"><path d="M7 1v9l7 0M7 10l-5 4" fill="none" stroke="#5a7d88"/><path d="M7 10l-3 4 9-4z" fill="#e26a6a"/><path d="M2 1l2 3 2-3M4 4v2M12 7l3 5M15 7l-3 5" stroke="#c8202a" fill="none"/><path d="M2 13l5-4" stroke="#2fa84a" stroke-width="1.500"/></symbol>
        <symbol id="s-stop" viewBox="0 0 16 16"><path d="M0 8l7-6v4h8v4H7v4z" fill="#f01f34" stroke="#b0101f" stroke-width=".5"/></symbol>
        <symbol id="s-folder" viewBox="0 0 24 20"><path d="M1 5l1-4h8v4h13v14H1z" fill="url(#gy)" stroke="#d2921a"/><path d="M1 7V4l4-3 4 2v2z" fill="#f0a21a"/></symbol>
        <symbol id="s-star" viewBox="0 0 16 16"><path d="M8 1l2 5 6 0-5 4 2 6-5-4-5 4 2-6-5-4h6z" fill="#1ea9d4"/></symbol>
        <symbol id="s-back" viewBox="0 0 16 16"><path d="M1 8l6-5v3h8v4H7v3z" fill="#b5b5b5" stroke="#999"/></symbol>
        <symbol id="s-fwd" viewBox="0 0 16 16"><path d="M15 8 9 3v3H1v4h8v3z" fill="#b5b5b5" stroke="#999"/></symbol>
        <symbol id="s-up" viewBox="0 0 16 16"><path d="M8 1l6 6h-4v8H6V7H2z" fill="#b5b5b5" stroke="#999"/></symbol>
        <symbol id="s-sync" viewBox="0 0 20 18"><path d="M2 10c0-6 8-8 12-5M18 8c0 6-8 8-12 5" fill="none" stroke="#1480a8" stroke-width="3"/><path d="M12 0l7 5-7 4zM8 9v8l-7-4z" fill="#1480a8"/></symbol>
        <symbol id="s-tool" viewBox="0 0 16 16"><path d="M1 1l6 6" stroke="#a9a9a9" stroke-width="3"/><path d="M7 6c4 0 7 3 8 6M6 7c0 4 2 6 5 8" fill="none" stroke="#d3202a" stroke-width="2.500"/></symbol>
        <symbol id="s-thumbs" viewBox="0 0 18 18"><path d="M0 3h18M0 9h18M0 15h18" stroke="#999"/><path d="M1 1h5v4H1z" fill="#f4a720"/><path d="M10 1h4v4h-4z" fill="#1480a8"/><path d="M1 7h4v4H1zM1 13h4v5H1zM10 13h4v4h-4z" fill="#24688a"/><path d="M10 7h4v4h-4z" fill="#d3602a"/></symbol>

        <!-- side tab icons, 24 units -->
        <symbol id="t-tree" viewBox="0 0 24 24"><path d="M1 4l5-3 6 1v8l-5 3-6-2z" fill="url(#gb)"/><path d="M1 4l6 1 5-3" stroke="#bfeaf7" fill="none"/><path d="M15 11h8M7 15v9M7 20h6" stroke="#8396a2" fill="none"/><path d="M16.500 16.500h6v6h-6z" fill="#fff" stroke="#527083" stroke-width="1.500"/></symbol>
        <symbol id="t-cube" viewBox="0 0 24 24"><path d="M.5.5h23v23H.5z" fill="#e6f5fb" stroke="#5a8ba3"/><path d="M1 1h22v4H1z" fill="#1fa0c8"/><path d="M12 7l8 3v8l-8 4-8-4v-8z" fill="url(#gy)" stroke="#b9770c"/><path d="M4 10l8 3 8-3M12 13v9" fill="none" stroke="#b9770c"/></symbol>
        <symbol id="t-image" viewBox="0 0 24 24"><path d="M.5.5h23v23H.5z" fill="#d7f0f8" stroke="#4f8299"/><path d="M0 12c4-12 7-5 10 0 4 2 6-6 14-1v13H0z" fill="#4fb4cf"/><path d="M0 12c4-12 7-5 10 0 4 2 6-6 14-1" fill="none" stroke="#4f8299"/><circle cx="17" cy="6" r="5" fill="#fbb724"/><path d="M0 16h8v-3l6 4-6 5v-3H0z" fill="#f0641e" stroke="#fff" stroke-width=".5"/></symbol>
        <symbol id="t-people" viewBox="0 0 24 24"><circle cx="16" cy="7" r="5" fill="#f9b21c"/><path d="M14 12l10 7v2H14z" fill="#f0a21a"/><path d="M10 3c5 0 6 5 3 10l7 6v3H0v-2l7-6C3 9 5 3 10 3z" fill="url(#gb)"/></symbol>
        <symbol id="t-robot" viewBox="0 0 24 24"><path d="M1 3h22v20H1z" fill="#f7b92a" stroke="#b9770c"/><path d="M2 1h8v3H2z" fill="#d88a4a"/><path d="M3 20l4-7 9-3 3-6 4 0 0 5-7 4-4 6-7 4z" fill="#13688c" stroke="#0a3f58"/><circle cx="12" cy="12" r="3" fill="#d4edf5"/></symbol>
    </svg>

    <header class="app-head">
        <div class="menu-bar">
            <div class="quick">
                <svg class="i16 logo"><use href="#s-logo"/></svg>
                <span class="vsep"></span>
                <button aria-label="新建"><svg class="i16"><use href="#s-new"/></svg></button>
                <button aria-label="打开"><svg class="i16"><use href="#s-open"/></svg></button>
                <button aria-label="保存"><svg class="i16"><use href="#s-save"/></svg></button>
                <button aria-label="打印"><svg class="i16"><use href="#s-print"/></svg></button>
                <button aria-label="批量打印"><svg class="i16"><use href="#s-printp"/></svg></button>
                <button aria-label="撤销"><svg class="i16"><use href="#s-undo"/></svg></button>
                <button aria-label="重做"><svg class="i16"><use href="#s-redo"/></svg></button>
                <button aria-label="重新生成"><svg class="i16"><use href="#s-regen"/></svg></button>
                <span class="caret"></span>
                <button aria-label="折叠"><svg class="i16"><use href="#s-left"/></svg></button>
            </div>
            <nav class="menus">
                <a href="#">文件(F)</a><a href="#">编辑(E)</a><a href="#">视图(V)</a><a href="#">插入(I)</a><a href="#">属性(A)</a><a href="#">查询(N)</a><a href="#">工具(T)</a><a href="#">实用工具(U)</a><a href="#">应用(P)</a><a href="#">窗口(W)</a><a href="#">帮助(H)</a><a href="#">云存储</a><a href="#">工程协同</a>
            </nav>
            <div class="app-title">中望3D 2024 SP x64 - [* 零件003.Z3PRT]</div>
            <div class="win-btns">
                <button aria-label="最小化"><svg class="i12" viewBox="0 0 12 12"><path d="M2.500 7.500h7v3h-7z" fill="#fff" stroke="#8d9296"/></svg></button>
                <button aria-label="还原"><svg class="i12" viewBox="0 0 12 12"><path d="M4.500 1.500h7v8h-7zM1.500 4.500h6v7h-6z" fill="#fff" stroke="#8d9296"/></svg></button>
                <button aria-label="关闭"><svg class="i12"><use href="#s-close"/></svg></button>
            </div>
        </div>
        <div class="tab-bar">
            <button class="file-btn">文件(F)</button>
            <nav class="tabs">
                <a href="#">造型</a><a href="#">曲面</a><a href="#">线框</a><a href="#">直接编辑</a><a href="#" class="on">钣金</a><a href="#">FTI</a><a href="#">焊件</a><a href="#">点云</a><a href="#">数据交换</a><a href="#">修复</a><a href="#">PMI</a><a href="#">工具</a><a href="#">视觉样式</a><a href="#">查询</a><a href="#">电极</a><a href="#">App</a><a href="#">模具</a><a href="#">仿真</a><a href="#">工程协同</a>
            </nav>
            <div class="tab-tools">
                <svg class="i12" viewBox="0 0 12 12"><path d="M1.500 6.500 6 2l4.500 4.500v3h-3L6 7.500l-1.500 2h-3z" fill="#fff" stroke="#555"/></svg>
                <div class="cmd-search">
                    <input type="text" placeholder="查找命令" aria-label="查找命令">
                    <svg class="i16"><use href="#s-lens"/></svg>
                </div>
                <button aria-label="设置"><svg class="i16" viewBox="0 0 16 16"><circle cx="8" cy="8" r="5.500" fill="#e8e8e8" stroke="#a3a3a3" stroke-width="3" stroke-dasharray="3 1"/><circle cx="8" cy="8" r="5" fill="#e8e8e8"/><circle cx="8" cy="8" r="2.500" fill="#fff" stroke="#a3a3a3"/></svg></button>
                <button aria-label="帮助" class="help"><svg class="i16" viewBox="0 0 16 16"><circle cx="8" cy="8" r="7" fill="#1d55b8" stroke="#9db6da" stroke-width="2"/><path d="M5.500 6.500c0-4 5-3.500 5 0 0 2-2.500 2-2.500 3.500M8 11.500v2" fill="none" stroke="#fff" stroke-width="2"/></svg></button>
                <span class="caret"></span>
                <button class="mdi" aria-label="最小化文档"><svg class="i12" viewBox="0 0 12 12"><path d="M3 8h6v2H3z"/></svg></button>
                <button class="mdi" aria-label="还原文档"><svg class="i12" viewBox="0 0 12 12"><path d="M4.500 2h5v5h-5zM2 5.500h5v4H2z" fill="#e1e5e8" stroke="#000"/><path d="M4 2h6M2 6h5" stroke="#000" stroke-width="2"/></svg></button>
                <button class="mdi" aria-label="关闭文档"><svg class="i12" viewBox="0 0 12 12"><path d="M3 3l7 7M10 3l-7 7" stroke="#000" stroke-width="2"/></svg></button>
            </div>
        </div>
    </header>

    <section class="ribbon">
        <div class="group">
            <div class="tools">
                <button><svg><use href="#r-sketch"/></svg><span>草图</span></button>
                <button class="more"><svg><use href="#r-plate"/></svg><span>拉伸平钣</span></button>
            </div>
            <h2>基体</h2>
        </div>
        <div class="group">
            <div class="tools">
                <button class="more"><svg><use href="#r-flange"/></svg><span>凸缘</span></button>
                <button><svg><use href="#r-profile"/></svg><span>轮廓凸缘</span></button>
                <button><svg><use href="#r-loft"/></svg><span>放样凸缘</span></button>
                <button><svg><use href="#r-sweep"/></svg><span>扫掠凸缘</span></button>
                <button><svg><use href="#r-linefold"/></svg><span>沿线折叠</span></button>
                <button><svg><use href="#r-jog"/></svg><span>转折</span></button>
            </div>
            <h2>钣金</h2>
        </div>
        <div class="group">
            <div class="tools">
                <button><svg><use href="#r-extend"/></svg><span>延伸凸缘</span></button>
                <button><svg><use href="#r-taper"/></svg><span>折弯拔锥</span></button>
                <button><svg><use href="#r-normal"/></svg><span>法向除料</span></button>
            </div>
            <h2>编辑</h2>
        </div>
        <div class="group">
            <div class="tools">
                <button><svg><use href="#r-corner"/></svg><span>闭合角</span></button>
            </div>
            <h2>角部</h2>
        </div>
        <div class="group">
            <div class="tools">
                <button><svg><use href="#r-dimple"/></svg><span>凹陷</span></button>
                <button><svg><use href="#r-louver"/></svg><span>百叶窗</span></button>
                <button><svg><use href="#r-form"/></svg><span>拉伸成型</span></button>
                <button><svg><use href="#r-extrude"/></svg><span>拉伸</span></button>
                <button><svg><use href="#r-hole"/></svg><span>孔</span></button>
                <button class="more"><svg><use href="#r-addbody"/></svg><span>添加实体</span></button>
            </div>
            <h2>成型</h2>
        </div>
        <div class="group">
            <div class="tools">
                <button><svg><use href="#r-fold"/></svg><span>折叠</span></button>
                <button><svg><use href="#r-unfold"/></svg><span>展开</span></button>
                <button><svg><use href="#r-flat"/></svg><span>展平</span></button>
                <button><svg><use href="#r-linear"/></svg><span>线性展开</span></button>
                <button><svg><use href="#r-modbend"/></svg><span>修改折弯</span></button>
                <button><svg><use href="#r-info"/></svg><span>显示折弯信息</span></button>
                <button><svg><use href="#r-anchor"/></svg><span>设定钣金固定面</span></button>
            </div>
            <h2>折弯</h2>
        </div>
        <div class="group">
            <div class="tools">
                <button><svg><use href="#r-skcut"/></svg><span>草图切口</span></button>
                <button><svg><use href="#r-cut"/></svg><span>切口</span></button>
                <button><svg><use href="#r-mark"/></svg><span>标记折弯</span></button>
                <button><svg><use href="#r-convert"/></svg><span>转换为钣金</span></button>
            </div>
            <h2>转化</h2>
        </div>
        <div class="group">
            <div class="tools">
                <button class="more"><svg><use href="#r-array"/></svg><span>阵列几何体</span></button>
                <button class="more"><svg><use href="#r-mirror"/></svg><span>镜像几何体</span></button>
                <button class="more"><svg><use href="#r-fillet"/></svg><span>圆角</span></button>
                <button><svg><use href="#r-chamfer"/></svg><span>倒角</span></button>
            </div>
            <h2>基础编辑</h2>
        </div>
    </section>

    <div class="pick-bar">
        <span class="grip"></span>
        <button class="hot" aria-label="智能选择"><svg class="i16"><use href="#s-bulb"/></svg></button>
        <button aria-label="添加"><svg class="i16"><use href="#s-plus"/></svg></button>
        <button aria-label="移除"><svg class="i16"><use href="#s-minus"/></svg></button>
        <button aria-label="框选"><svg class="i16"><use href="#s-pick"/></svg></button>
        <span class="caret"></span>
        <button aria-label="多边形选择"><svg class="i16"><use href="#s-hex"/></svg></button>
        <span class="vsep"></span>
        <button aria-label="过滤器"><svg class="i16"><use href="#s-filter"/></svg></button>
        <div class="combo w97"><select aria-label="过滤类型"><option>全部</option></select></div>
        <button class="hot" aria-label="零件范围"><svg class="i16"><use href="#s-part"/></svg></button>
        <div class="combo w130 off"><select aria-label="拾取范围" disabled><option>仅有零件</option></select></div>
        <button disabled aria-label="关联"><svg class="i16"><use href="#s-links"/></svg></button>
        <button disabled aria-label="标记"><svg class="i16"><use href="#s-stamp"/></svg></button>
        <span class="vsep"></span>
        <button aria-label="列表"><svg class="i16"><use href="#s-lista"/></svg></button>
        <button aria-label="列表添加"><svg class="i16"><use href="#s-listb"/></svg></button>
        <button aria-label="列表移除"><svg class="i16"><use href="#s-listc"/></svg></button>
        <button aria-label="列表反选"><svg class="i16"><use href="#s-lista"/></svg></button>
        <button aria-label="光标"><svg class="i16"><use href="#s-cursor"/></svg></button>
        <button aria-label="图层"><svg class="i16"><use href="#s-layers"/></svg></button>
        <button aria-label="实体"><svg class="i16"><use href="#s-boxes"/></svg></button>
        <button aria-label="全局"><svg class="i16"><use href="#s-globe"/></svg></button>
        <button aria-label="折弯设置"><svg class="i16"><use href="#s-bendset"/></svg></button>
        <span class="vsep"></span>
        <button aria-label="目标"><svg class="i16"><use href="#s-target"/></svg></button>
        <button aria-label="捕捉"><svg class="i16"><use href="#s-snap"/></svg></button>
        <button aria-label="方框"><svg class="i16"><use href="#s-square"/></svg></button>
        <div class="combo w97"><select aria-label="选择方式"><option>单一选择</option></select></div>
        <button aria-label="清除"><svg class="i16"><use href="#s-erase"/></svg></button>
        <button aria-label="选项"><svg class="i16"><use href="#s-gear"/></svg></button>
        <button aria-label="继续"><svg class="i16"><use href="#s-play"/></svg></button>
        <button aria-label="点"><svg class="i16"><use href="#s-dots"/></svg></button>
        <button aria-label="端点"><svg class="i16"><use href="#s-line"/></svg></button>
        <button aria-label="中点"><svg class="i16"><use href="#s-line2"/></svg></button>
        <button aria-label="圆心"><svg class="i16"><use href="#s-circdot"/></svg></button>
        <button aria-label="象限点"><svg class="i16"><use href="#s-circ"/></svg></button>
        <button aria-label="曲线点"><svg class="i16"><use href="#s-wave"/></svg></button>
        <button aria-label="曲线"><svg class="i16"><use href="#s-wave2"/></svg></button>
        <button aria-label="相切"><svg class="i16"><use href="#s-arc"/></svg></button>
        <button aria-label="直线"><svg class="i16"><use href="#s-line"/></svg></button>
        <button aria-label="面"><svg class="i16"><use href="#s-cube3"/></svg></button>
        <button aria-label="体"><svg class="i16"><use href="#s-cube3"/></svg></button>
    </div>

    <main class="work">
        <aside class="manager">
            <div class="pane-head">管理器
                <span class="head-btns"><svg class="i12"><use href="#s-pin"/></svg><svg class="i12"><use href="#s-close"/></svg></span>
            </div>
            <div class="manager-body">
                <div class="side-tabs">
                    <button class="on" aria-label="管理器"><svg><use href="#t-tree"/></svg></button>
                    <button aria-label="装配"><svg><use href="#t-cube"/></svg></button>
                    <button aria-label="视图"><svg><use href="#t-image"/></svg></button>
                    <button aria-label="用户"><svg><use href="#t-people"/></svg></button>
                </div>
                <div class="manager-main">
                    <div class="tree-filter">
                        <div class="combo"><select aria-label="显示"><option>显示常用</option></select></div>
                        <input type="text" aria-label="过滤特征">
                        <button aria-label="过滤"><svg class="i16"><use href="#s-funnel"/></svg></button>
                    </div>
                    <div class="tree-area stripes">
                        <table class="tree">
                            <thead><tr><th>特征节点</th><th></th></tr></thead>
                            <tbody>
                                <tr><td><div class="node l0"><svg class="tw"><use href="#s-down"/></svg><svg class="i16"><use href="#s-assy"/></svg>零件003</div></td><td></td></tr>
                                <tr><td><div class="node l1"><svg class="tw"><use href="#s-right"/></svg><svg class="i16"><use href="#s-solid"/></svg>实体(1)</div></td><td></td></tr>
                                <tr><td><div class="node l1"><svg class="tw"><use href="#s-right"/></svg><svg class="i16"><use href="#s-solid"/></svg>钣金</div></td><td></td></tr>
                                <tr><td><div class="node l1"><svg class="tw"><use href="#s-down"/></svg><svg class="i16"><use href="#s-hist"/></svg>历史</div></td><td></td></tr>
                                <tr><td><div class="node l2"><span class="tw"></span><input type="checkbox" id="n1" checked><svg class="i16"><use href="#s-csys"/></svg><label for="n1">默认CSYS</label></div></td><td></td></tr>
                                <tr><td><div class="node l2"><svg class="tw"><use href="#s-right"/></svg><input type="checkbox" id="n2" checked><svg class="i16"><use href="#r-plate"/></svg><label for="n2">平钣1</label></div></td><td></td></tr>
                                <tr><td><div class="node l2"><span class="tw"></span><input type="checkbox" id="n3" checked><svg class="i16"><use href="#r-flange"/></svg><label for="n3">凸缘1</label></div></td><td></td></tr>
                                <tr><td><div class="node l2"><span class="tw"></span><input type="checkbox" id="n4" checked><svg class="i16"><use href="#r-flange"/></svg><label for="n4">凸缘2</label></div></td><td></td></tr>
                                <tr><td><div class="node l2"><span class="tw"></span><input type="checkbox" id="n5" checked><svg class="i16"><use href="#r-anchor"/></svg><label for="n5">固定面1</label></div></td><td></td></tr>
                                <tr><td><div class="node l2 stop"><span class="tw"></span><svg class="i16"><use href="#s-stop"/></svg>----- 建模停止 -----</div></td><td></td></tr>
                            </tbody>
                        </table>
                    </div>
                    <h3 class="fold-head">回放</h3>
                    <div class="playback">
                        <div class="play-row">
                            <button class="live" aria-label="播放"><svg viewBox="0 0 24 24"><path d="M4 3l16 9-16 9z" fill="#18b4dc" stroke="#0f6f92"/><path d="M5 5l11 6-11 3z" fill="#e4f6fb"/></svg></button>
                            <button disabled aria-label="下一步"><svg viewBox="0 0 24 24"><path d="M2 3l14 9-14 9zM17 2h4v20h-4z" fill="url(#gg)" stroke="#999"/></svg></button>
                            <button disabled aria-label="播放到"><svg viewBox="0 0 24 24"><path d="M7 5l12 7-12 7z" fill="url(#gg)" stroke="#999"/><path d="M5 2c-5 6-5 14 0 20M19 2c5 6 5 14 0 20" fill="none" stroke="#999" stroke-width="2"/></svg></button>
                            <button disabled aria-label="单步播放"><svg viewBox="0 0 24 24"><path d="M6 6l9 6-9 6zM15 5h3v14h-3z" fill="url(#gg)" stroke="#999"/><path d="M4 2c-5 6-5 14 0 20M20 2c5 6 5 14 0 20" fill="none" stroke="#999" stroke-width="2"/></svg></button>
                            <button disabled aria-label="快进"><svg viewBox="0 0 24 24"><path d="M1 3l11 9-11 9zM12 3l11 9-11 9z" fill="url(#gg)" stroke="#999"/></svg></button>
                            <button disabled aria-label="快退"><svg viewBox="0 0 24 24"><path d="M12 3 1 12l11 9zM23 3l-11 9 11 9z" fill="url(#gg)" stroke="#999"/></svg></button>
                        </div>
                        <div class="play-row">
                            <button disabled aria-label="关联"><svg viewBox="0 0 24 24"><path d="M2 22l4-5M19 5l3-4M10 9l4 4" fill="none" stroke="#999" stroke-width="2"/><ellipse cx="8" cy="15" rx="4" ry="3" transform="rotate(-40 8 15)" fill="none" stroke="#999" stroke-width="2"/><ellipse cx="16" cy="7" rx="5" ry="4" transform="rotate(-40 16 7)" fill="none" stroke="#999" stroke-width="2"/></svg></button>
                            <button disabled aria-label="编辑"><svg viewBox="0 0 24 24"><path d="M2 22l3-7L19 1l3 3L8 18z" fill="#e2e2e2" stroke="#999"/><path d="M2 22l2-4 2 2z" fill="#777"/></svg></button>
                            <button disabled aria-label="重定义"><svg viewBox="0 0 24 24"><path d="M2 4l6-3v14l-6 5z" fill="#aaa" stroke="#888"/><path d="M2 21l7-7h14l-6 8z" fill="#e6e6e6" stroke="#999"/><path d="M11 3c5-1 8 2 9 6" fill="none" stroke="#888" stroke-width="2"/><path d="M16 8h7l-3 5z" fill="#888"/></svg></button>
                            <button disabled aria-label="删除"><svg viewBox="0 0 24 24"><path d="M4 4l16 16M20 4 4 20" stroke="#858585" stroke-width="4"/></svg></button>
                            <button disabled aria-label="颜色"><svg viewBox="0 0 24 24"><path d="M.5.5h23v23H.5z" fill="#a6a6a6" stroke="#848484"/><path d="M1 1h22v8c-8 1-14 3-22 8z" fill="#b5b5b5"/></svg></button>
                        </div>
                    </div>
                </div>
            </div>
        </aside>

        <section class="center">
            <div class="doc-tabs">
                <a href="#">* 零件002.Z3PRT <svg class="i12"><use href="#s-tab-x"/></svg></a>
                <a href="#" class="on">* 零件003.Z3PRT <svg class="i12"><use href="#s-tab-x"/></svg></a>
                <button aria-label="新标签"><svg class="i12" viewBox="0 0 12 12"><path d="M6 1v10M1 6h10" stroke="#a69c9c" stroke-width="2"/></svg></button>
                <svg class="i12 doc-more" viewBox="0 0 12 12"><path d="M3 3h7v2H3zM3 7h7l-3 4z" fill="#8b8583"/></svg>
            </div>
            <div class="viewport">
                <svg class="scene" viewBox="337 193 1887 1175" preserveAspectRatio="xMidYMid meet">
                    <defs>
                        <linearGradient id="bendL" gradientUnits="userSpaceOnUse" x1="1072" y1="750" x2="1098" y2="789"><stop offset="0" stop-color="#86a1ac"/><stop offset=".35" stop-color="#93b1bd"/><stop offset=".6" stop-color="#a2c3d0"/><stop offset=".75" stop-color="#aecfdb"/><stop offset="1" stop-color="#9dbcc9"/></linearGradient>
                        <linearGradient id="bendR" gradientUnits="userSpaceOnUse" x1="1530" y1="790" x2="1498" y2="833"><stop offset="0" stop-color="#7a929b"/><stop offset=".3" stop-color="#7f98a2"/><stop offset=".8" stop-color="#99b7c4"/><stop offset="1" stop-color="#9fbecb"/></linearGradient>
                    </defs>
                    <!-- sheet metal part -->
                    <g stroke="#101010" stroke-width="1.200" stroke-linejoin="round">
                        <path d="M907 897L1288 681L1709 966L1328 1182z" fill="#9fbecb"/>
                        <path d="M817 642L1200 426L1263 642L881 858z" fill="#86a1ac"/>
                        <path d="M881 858L1263 642C1267 660 1277 674 1288 681L907 897C894 889 885 875 881 858z" fill="url(#bendL)"/>
                        <path d="M1244 421L1666 707L1728 923L1309 638z" fill="#7a929b"/>
                        <path d="M1309 638L1728 923C1732 943 1725 959 1709 966L1288 681C1304 671 1313 655 1309 638z" fill="url(#bendR)"/>
                        <path d="M814 639L1197 423L1200 426L817 642z" fill="#a5c4d1"/>
                        <path d="M814 639L878 858C883 877 893 893 907 902L907 897C894 889 885 875 881 858L817 642z" fill="#6f878f"/>
                        <path d="M1244 421L1249 419L1670 704L1666 707z" fill="#a5c4d1"/>
                        <path d="M1670 704L1734 921C1738 945 1727 964 1709 971L1709 966C1725 959 1732 943 1728 923L1666 707z" fill="#86a1ac"/>
                        <path d="M907 897L1328 1182L1328 1187L907 902z" fill="#6f878f"/>
                        <path d="M1328 1182L1709 966L1709 971L1328 1187z" fill="#86a1ac"/>
                        <path d="M878 858h3M1728 923l6-2" fill="none"/>
                    </g>
                    <!-- datum planes and part axes -->
                    <path d="M1251 790L1309 830L1336 922L1276 880zM1218 883L1309 830L1336 922L1243 970z" fill="#9ab2b8" fill-opacity=".6"/>
                    <g fill="none" stroke="#ad6f18" stroke-width="1.200">
                        <path d="M1276 877L1251 790L1309 830L1218 883L1243 968"/>
                        <path d="M1276 883L1185 934L1244 974" stroke="#9fb0a8"/>
                        <path d="M1289 760l7 22"/>
                        <path d="M1219 842l25 18M1194 1002l-26 15" stroke="#a0a898"/>
                        <path d="M1336 922L1264 870" stroke="#c07068" stroke-width="2"/>
                        <path d="M1336 922L1244 974" stroke="#84a05c" stroke-width="2"/>
                        <path d="M1244 974l-30 17" stroke="#7cc490" stroke-width="2"/>
                        <path d="M1335 918L1302 805" stroke="#2a20c8" stroke-width="2"/>
                    </g>
                    <path d="M1284 739l10 20c-2 3-7 3-10 2z" fill="#b96a08"/><path d="M1284 739l10 20-4 2z" fill="#6e3e04"/>
                    <path d="M1296 781l12 22c-2 4-9 4-13 3z" fill="#1010e8"/><path d="M1296 781l12 22-4 3z" fill="#08089a"/>
                    <path d="M1244 860l21 4c2 4-3 12-8 12z" fill="#b08488"/>
                    <path d="M1219 842l16 6c1 3-3 7-6 7z" fill="#95a5a0"/>
                    <path d="M1194 1002l19-17c4 1 7 5 7 10z" fill="#86bda0"/>
                    <path d="M1154 1025l14-14c4 1 7 4 7 8z" fill="#a9b9b4" stroke="#8a9894" stroke-width=".5"/>
                    <text x="1277" y="728" fill="#a56510">Z</text>
                    <!-- view triad -->
                    <g stroke-width="2" fill="none"><path d="M470 1223l-19-66" stroke="#00f"/><path d="M470 1223l-42-28" stroke="#f00"/><path d="M470 1223l-68 39" stroke="#2ccc22"/></g>
                    <path d="M444 1135l11 18c-1 5-7 5-11 4z" fill="#0c0cd8"/>
                    <path d="M414 1186l17 5c0 4-4 8-8 7z" fill="#d00000"/>
                    <path d="M382 1273l17-16c4 1 6 6 5 10z" fill="#1a9c14"/>
                    <text x="441" y="1134" fill="#00f">Z</text>
                    <text x="407" y="1189" fill="#f00">X</text>
                    <text x="371" y="1287" fill="#2ccc22">Y</text>
                </svg>
                <p class="hint">&lt;单击右键&gt;环境相关选项.<br>&lt;Shift + 鼠标右键&gt; 显示选择过滤器.</p>
                <div class="view-bar">
                    <button aria-label="退出"><svg class="i16"><use href="#s-exit"/></svg></button>
                    <button aria-label="基准"><svg class="i16"><use href="#s-csgrid"/></svg><span class="caret"></span></button>
                    <button aria-label="擦除"><svg class="i16"><use href="#s-brush"/></svg></button>
                    <button aria-label="对齐"><svg class="i16"><use href="#s-block"/></svg></button>
                    <button aria-label="着色"><svg class="i16"><use href="#s-cube"/></svg><span class="caret"></span></button>
                    <button aria-label="线框"><svg class="i16"><use href="#s-wire"/></svg><span class="caret"></span></button>
                    <button aria-label="面片"><svg class="i16"><use href="#s-poly"/></svg><span class="caret"></span></button>
                    <button aria-label="剖面"><svg class="i16"><use href="#s-section"/></svg><span class="caret"></span></button>
                    <button aria-label="旋转中心"><svg class="i16"><use href="#s-snapax"/></svg><span class="caret"></span></button>
                    <button aria-label="视图"><svg class="i16"><use href="#s-view"/></svg></button>
                    <button aria-label="标注"><svg class="i16"><use href="#s-dim"/></svg><span class="caret"></span></button>
                    <button aria-label="显示"><svg class="i16"><use href="#s-monitor"/></svg><span class="caret"></span></button>
                    <button aria-label="线色"><svg class="i16"><use href="#s-black"/></svg></button>
                    <button aria-label="面色"><svg class="i16"><use href="#s-blue"/></svg></button>
                    <button aria-label="图层"><svg class="i16"><use href="#s-stack"/></svg><span class="caret"></span></button>
                    <div class="combo layer">
                        <svg class="layer-ico" viewBox="0 0 36 18"><path d="M7 7c0-7 9-7 9 0 0 3-2 3-2 5H9c0-2-2-2-2-5z" fill="#fffbe0" stroke="#b8a020"/><path d="M9 13h5v3H9z" fill="#888"/><path d="M22 2h12v14H22z" fill="#d6dc8a"/><circle cx="28" cy="9" r="6" fill="#ffe92a" stroke="#8a8a20"/></svg>
                        <select aria-label="图层"><option>图层0000</option></select>
                    </div>
                </div>
                <div class="scale">176.03mm</div>
            </div>
        </section>

        <aside class="right">
            <div class="pane-head">输出
                <span class="head-btns"><svg class="i12" viewBox="0 0 12 12"><path d="M2 2h8v8H2z" fill="#1c1c1c"/></svg><svg class="i12"><use href="#s-pin"/></svg><svg class="i12"><use href="#s-close"/></svg></span>
            </div>
            <div class="output">
                <div class="log">
                    <p>添加凸缘</p>
                    <p class="warn">警告："重定义"失败或者被取消</p>
                    <p>默认设置更新.</p>
                    <p>显示实体信息</p>
                    <p>默认设置更新.</p>
                    <p>添加凸缘</p>
                    <p class="warn">警告："重定义"失败或者被取消</p>
                    <p>默认设置更新.</p>
                    <p>显示实体信息</p>
                    <p>显示实体信息</p>
                    <p>添加凸缘</p>
                    <p>显示实体信息</p>
                    <p>保存文件...</p>
                    <p>保存成功.</p>
                    <p class="note">注意：[TestcvxDataGetAll.dll]加载成功。</p>
                    <p class="warn">警告：对象7466在[零件003.Z3PRT]不是曲面。</p>
                    <p class="note">注意：[TestcvxDataGetAll.dll]加载成功。</p>
                    <p>设定钣金固定面</p>
                    <p class="note">注意：[零件003.Z3PRT]成功创建恢复文件</p>
                </div>
                <div class="scroll out-scroll"><span class="up"></span><span class="thumb"></span><span class="down"></span></div>
            </div>
            <div class="pane-head">文件浏览器
                <span class="head-btns"><svg class="i12"><use href="#s-pin"/></svg><svg class="i12"><use href="#s-close"/></svg></span>
            </div>
            <div class="browser">
                <div class="browser-main">
                    <div class="nav-row">
                        <button disabled aria-label="后退"><svg class="i16"><use href="#s-back"/></svg></button>
                        <button disabled aria-label="前进"><svg class="i16"><use href="#s-fwd"/></svg></button>
                        <button disabled aria-label="向上"><svg class="i16"><use href="#s-up"/></svg></button>
                        <button class="live" aria-label="刷新"><svg class="i18"><use href="#s-sync"/></svg></button>
                    </div>
                    <ul class="drives stripes">
                        <li><svg class="tw"><use href="#s-right"/></svg><svg class="i16"><use href="#s-star"/></svg>收藏</li>
                        <li><svg class="tw"><use href="#s-right"/></svg><svg class="i16"><use href="#s-folder"/></svg>系统(C:)</li>
                        <li><svg class="tw"><use href="#s-right"/></svg><svg class="i16"><use href="#s-folder"/></svg>(D:)</li>
                        <li><svg class="tw"><use href="#s-right"/></svg><svg class="i16"><use href="#s-folder"/></svg>(E:)</li>
                    </ul>
                    <div class="lower">
                        <div class="finder">
                            <h3 class="fold-head boxed">搜索</h3>
                            <div class="find-row">
                                <div class="combo grow dim"><select aria-label="搜索"><option>搜索...</option></select></div>
                                <button aria-label="搜索"><svg class="i16"><use href="#s-lens"/></svg></button>
                                <button aria-label="清除"><svg class="i16"><use href="#s-tool"/></svg></button>
                            </div>
                            <h3 class="fold-head boxed">文件列表</h3>
                            <div class="find-row">
                                <button class="thumbs" aria-label="缩略图"><svg class="i18"><use href="#s-thumbs"/></svg><span class="caret"></span></button>
                                <div class="combo grow"><select aria-label="文件类型"><option>所有支持文件</option></select></div>
                            </div>
                            <div class="file-list"></div>
                            <div class="obj-row">
                                <label for="objlist">对象列表</label>
                                <div class="combo grow"><select id="objlist"><option></option></select></div>
                            </div>
                        </div>
                        <div class="scroll find-scroll"><span class="up"></span><span class="thumb"></span><span class="down"></span></div>
                    </div>
                </div>
                <div class="side-tabs end">
                    <button class="on" aria-label="文件浏览器"><svg><use href="#s-folder"/></svg></button>
                    <button aria-label="重用库"><svg><use href="#t-robot"/></svg></button>
                    <button aria-label="图层管理"><svg><use href="#s-stack"/></svg></button>
                </div>
            </div>
        </aside>
    </main>

    <footer class="status">
        <span class="status-text">选择命令或实体</span>
        <span class="status-sep"></span>
        <button class="hot" aria-label="命令窗口"><svg class="i16" viewBox="0 0 16 16"><path d="M1.500 1.500h13v13h-13z" fill="#fff" stroke="#3a62b0"/><path d="M2 2h12v2H2z" fill="#3a62b0"/><path d="M4 6v8" stroke="#555" stroke-dasharray="1 1"/><path d="M7 7h5l2 1M10 7v7" stroke="#b02020" stroke-width="2" fill="none"/></svg></button>
        <button class="hot" aria-label="显示器"><svg class="i16" viewBox="0 0 16 16"><path d="M.5 2.500h15v10H.5z" fill="#22b5d0" stroke="#0d6f8a"/><path d="M5 13h6v2H5z" fill="#333"/></svg></button>
        <button class="hot" aria-label="输出窗口"><svg class="i16" viewBox="0 0 16 16"><path d="M1.500 1.500h13v13h-13z" fill="#fff" stroke="#3a62b0"/><path d="M2 2h12v2H2z" fill="#3a62b0"/><path d="M3 7.500h10M3 9.500h10M3 11.500h7" stroke="#8a98b0"/></svg></button>
        <input type="text" class="status-input" aria-label="命令输入">
        <span class="watermark">CSDN @_林枭_</span>
    </footer>
</body>
</html>
```

FILE: styles.css
```
* {
    box-sizing: border-box;
}
body {
    margin: 0;
    height: 100vh;
    display: flex;
    flex-direction: column;
    overflow: hidden;
    background-color: #e1e5e8;
    color: #000;
    font-family: Roboto, "Noto Sans CJK SC", sans-serif;
    font-size: 12px;
    line-height: 18px;
}
button, input, select {
    font: inherit;
    color: inherit;
    margin: 0;
    border-radius: 0;
}
button {
    display: flex;
    align-items: center;
    justify-content: center;
    padding: 0;
    border: none;
    background: none;
}
a {
    color: inherit;
    text-decoration: none;
}
h2, h3, p, ul {
    margin: 0;
    padding: 0;
    font-size: 12px;
    font-weight: normal;
    list-style: none;
}
svg {
    display: block;
    flex: none;
}
.sprite {
    position: absolute;
}
.i12 { width: 12px; height: 12px; }
.i16 { width: 16px; height: 16px; }
.i18 { width: 18px; height: 18px; }
.caret {
    flex: none;
    width: 7px;
    height: 4px;
    background-color: #333;
    clip-path: polygon(0 0, 100% 0, 50% 100%);
}
.vsep {
    flex: none;
    width: 1px;
    height: 16px;
    margin: 0 3px;
    background-color: #bfc4ca;
}
.hot {
    background-color: #ffe57a;
    border: 1px solid #c69a3c;
}

/* combo boxes */
.combo {
    position: relative;
    display: flex;
    height: 20px;
    background-color: #fff;
    border: 1px solid #b8bfc9;
}
.combo select {
    flex: 1;
    min-width: 0;
    padding: 0 16px 0 2px;
    border: none;
    background: none;
    appearance: none;
    opacity: 1;
}
.combo::after {
    content: "";
    position: absolute;
    right: 5px;
    top: 50%;
    width: 6px;
    height: 4px;
    margin-top: -3px;
    background-color: #333;
    clip-path: polygon(0 0, 100% 0, 50% 100%);
}
.w97 { width: 97px; }
.w130 { width: 130px; }
.combo.off {
    background-color: #eeefef;
    border-color: #eeefef;
    color: #8a8a8a;
}
.combo.off::after {
    background-color: #aaa;
}
.combo.dim {
    color: #777;
}

/* title and menus */
.menu-bar {
    display: flex;
    align-items: center;
    height: 25px;
}
.quick {
    display: flex;
    align-items: center;
    width: 259px;
}
.logo {
    margin: 0 5px 0 4px;
}
.quick button {
    width: 24px;
    height: 24px;
}
.quick .caret {
    margin-left: 3px;
}
.menus {
    display: flex;
}
.menus a {
    padding: 0 8px;
    white-space: nowrap;
}
.app-title {
    flex: 1;
    text-align: center;
    color: #333;
}
.win-btns {
    display: flex;
    gap: 12px;
    padding-right: 4px;
}
.tab-bar {
    display: flex;
    height: 22px;
    padding-left: 1px;
    border-bottom: 1px solid #b8bfc9;
}
.file-btn {
    width: 75px;
    height: 20px;
    margin: 1px 2px 0 0;
    background-color: #2762ba;
    border: 1px solid #1a4a96;
    color: #fff;
}
.tabs {
    display: flex;
}
.tabs a {
    height: 22px;
    padding: 3px 11px 0;
    color: #444;
    white-space: nowrap;
}
.tabs .on {
    padding: 2px 10px 0;
    background-color: #fcfcfc;
    border: 1px solid #b8bfc9;
    border-bottom: none;
}
.tab-tools {
    display: flex;
    align-items: center;
    gap: 10px;
    margin-left: auto;
    padding-right: 1px;
}
.cmd-search {
    display: flex;
    align-items: center;
    width: 158px;
    height: 20px;
    padding-right: 6px;
    background-color: #fff;
    border: 1px solid #b8bfc9;
}
.cmd-search input {
    flex: 1;
    min-width: 0;
    padding: 0 2px;
    border: none;
    background: none;
}
.cmd-search input::placeholder {
    color: #777;
}
.help {
    margin-left: 2px;
}
.tab-tools .caret, .mdi {
    margin-left: -5px;
}

/* ribbon */
.ribbon {
    display: flex;
    height: 94px;
    background-color: #fcfcfc;
    border-bottom: 1px solid #b8bfc9;
}
.group {
    display: flex;
    flex-direction: column;
    padding: 6px 4px 0;
    border-right: 1px solid #d3d8dd;
}
.group:first-child {
    padding-left: 9px;
}
.tools {
    display: flex;
    height: 69px;
}
.tools button {
    flex-direction: column;
    justify-content: flex-start;
    padding: 0 6px;
    color: #222;
    white-space: nowrap;
}
.tools svg {
    width: 32px;
    height: 32px;
    margin: 0 -6px 2px;
}
.tools .more::after {
    content: "";
    width: 6px;
    height: 3px;
    margin-top: 7px;
    background-color: #333;
    clip-path: polygon(0 0, 100% 0, 50% 100%);
}
.group h2 {
    text-align: center;
    color: #6a7080;
}

/* selection bar */
.pick-bar {
    display: flex;
    align-items: center;
    height: 31px;
    padding-left: 4px;
}
.pick-bar button {
    flex: none;
    width: 24px;
    height: 22px;
}
.pick-bar .caret {
    margin: 0 4px 0 -1px;
}
.pick-bar .combo {
    flex: none;
    margin: 0 1px;
}
.pick-bar .combo.off {
    margin-left: 0;
}
.grip {
    width: 2px;
    height: 16px;
    margin-right: 4px;
    background: repeating-linear-gradient(#7d8894 0 2px, transparent 2px 4px);
}

/* main area */
.work {
    flex: 1;
    min-height: 0;
    display: flex;
    gap: 3px;
}
.pane-head {
    display: flex;
    align-items: center;
    justify-content: space-between;
    flex: none;
    height: 20px;
    padding: 0 4px;
    color: #333;
}
.head-btns {
    display: flex;
    gap: 7px;
}
.manager {
    display: flex;
    flex-direction: column;
    width: 334px;
}
.manager .pane-head {
    padding-right: 6px;
}
.manager-body {
    flex: 1;
    min-height: 0;
    display: flex;
}
.side-tabs {
    display: flex;
    flex-direction: column;
    width: 32px;
    padding-left: 2px;
    border-top: 1px solid #b8bfc9;
}
.side-tabs button {
    height: 47px;
}
.side-tabs svg {
    width: 24px;
    height: 24px;
}
.side-tabs .on {
    background-color: #fcfcfc;
    border: 1px solid #b8bfc9;
    border-width: 0 0 1px 1px;
}
.manager-main {
    flex: 1;
    display: flex;
    flex-direction: column;
    padding: 1px;
    border: 1px solid #b8bfc9;
}
.tree-filter {
    display: flex;
    gap: 1px;
    padding-bottom: 1px;
    background-color: #b8bfc9;
}
.tree-filter .combo, .tree-filter input {
    flex: 1;
    min-width: 0;
    height: 24px;
    background-color: #fff;
    border: 1px solid #b8bfc9;
}
.tree-filter button {
    width: 22px;
    background-color: #f4f5f6;
}
.stripes {
    background: repeating-linear-gradient(#fff 0 18px, #f5f5f5 18px 36px);
}
.tree-area {
    flex: 1;
    min-height: 0;
    background-position: 0 22px;
    border-bottom: 2px solid #b8bfc9;
}
.tree {
    width: 100%;
    table-layout: fixed;
    border-collapse: collapse;
}
.tree th {
    height: 22px;
    padding: 0 4px;
    border-bottom: 1px solid #a5acb8;
    background: linear-gradient(#fafbfb, #e9ecf0);
    text-align: left;
    font-weight: normal;
}
.tree th:first-child {
    width: 230px;
}
.tree td {
    height: 18px;
    padding: 0;
}
.tree tr > :first-child {
    border-right: 1px solid #b8bfc9;
}
.node, .drives li {
    display: flex;
    align-items: center;
    gap: 2px;
    height: 18px;
    white-space: nowrap;
}
.tw {
    width: 10px;
    height: 10px;
    margin-right: 4px;
}
.l0 { padding-left: 2px; }
.l1 { padding-left: 16px; }
.l2 { padding-left: 31px; }
.l2 .tw { margin-right: 1px; }
.node input {
    flex: none;
    width: 13px;
    height: 13px;
    margin: 0 4px 0 0;
    appearance: none;
    background-color: #fff;
    border: 1px solid #000;
}
.node input:checked::after {
    content: "";
    display: block;
    width: 4px;
    height: 8px;
    margin: 0 0 0 4px;
    border: solid #10a010;
    border-width: 0 2px 2px 0;
    transform: rotate(40deg);
}
.stop {
    color: #f00;
    font-family: "DejaVu Sans", "Noto Sans CJK SC", sans-serif;
}
.fold-head {
    display: flex;
    align-items: center;
    flex: none;
    gap: 7px;
    height: 23px;
    padding-left: 4px;
    background-color: #fcfcfc;
    border-bottom: 1px solid #b8bfc9;
    color: #222;
    font-weight: bold;
}
.fold-head::before {
    content: "";
    width: 9px;
    height: 8px;
    background-color: #4c525c;
    clip-path: polygon(0 0, 100% 0, 50% 100%);
}
.playback {
    display: flex;
    flex-direction: column;
    gap: 2px;
    padding: 5px 0 4px;
}
.play-row {
    display: flex;
    justify-content: center;
    gap: 1px;
    padding-right: 2px;
}
.play-row button {
    width: 36px;
    height: 32px;
    background-color: #efefef;
    border: 1px solid #cfd3d8;
}
.play-row svg {
    width: 24px;
    height: 24px;
}
.play-row .live, .nav-row .live {
    background-color: #fff;
    border-color: #b8bfc9;
}

/* document area */
.center {
    flex: 1;
    min-width: 0;
    display: flex;
    flex-direction: column;
}
.doc-tabs {
    display: flex;
    align-items: center;
    height: 21px;
}
.doc-tabs a {
    display: flex;
    align-items: center;
    justify-content: flex-end;
    gap: 5px;
    width: 150px;
    height: 22px;
    padding-right: 14px;
}
.doc-tabs a.on {
    z-index: 1;
    background-color: #fcfcfc;
    border: 1px solid #b8bfc9;
    border-bottom: none;
}
.doc-tabs button {
    width: 22px;
}
.doc-more {
    margin-left: auto;
    margin-right: 4px;
}
.viewport {
    flex: 1;
    min-height: 0;
    position: relative;
    background: linear-gradient(#fefefe, #a0a0a0);
    border: 1px solid #b8bfc9;
}
.scene {
    position: absolute;
    width: 100%;
    height: 100%;
    font-family: "Noto Sans", sans-serif;
    font-size: 18px;
    text-anchor: middle;
}
.hint {
    position: absolute;
    top: 8px;
    left: 21px;
    font-family: "Noto Sans", "Noto Sans CJK SC", sans-serif;
    font-size: 11px;
    line-height: 14px;
}
.view-bar {
    position: relative;
    display: flex;
    align-items: center;
    justify-content: center;
    height: 26px;
}
.view-bar button {
    flex: none;
    gap: 5px;
    height: 24px;
    padding: 0 5px 0 4px;
}
.view-bar .layer {
    align-items: center;
    width: 115px;
    height: 22px;
}
.layer-ico {
    width: 36px;
    height: 18px;
}
.view-bar .layer select {
    padding-left: 2px;
}
.scale {
    position: absolute;
    left: 4px;
    bottom: 0;
    font-family: "Noto Sans", sans-serif;
    font-size: 17px;
    line-height: 21px;
}

/* right side */
.right {
    display: flex;
    flex-direction: column;
    width: 330px;
}
.output {
    flex: none;
    display: flex;
    height: 319px;
    margin-left: 1px;
    margin-bottom: 3px;
    background-color: #fff;
    border: 1px solid #b8bfc9;
    border-right: none;
}
.log {
    flex: 1;
    padding: 2px 4px 0;
    overflow: hidden;
    white-space: nowrap;
}
.log p {
    line-height: 17px;
}
.warn {
    color: #f00;
}
.note {
    color: #006400;
}
.scroll {
    display: flex;
    flex-direction: column;
    flex: none;
    width: 15px;
    background-color: #d9dee6;
}
.scroll .up, .scroll .down {
    flex: none;
    width: 9px;
    height: 5px;
    margin: 7px auto;
    background-color: #444;
}
.scroll .up {
    clip-path: polygon(50% 0, 100% 100%, 0 100%);
}
.scroll .down {
    clip-path: polygon(0 0, 100% 0, 50% 100%);
}
.scroll .thumb {
    flex: 1;
    background: repeating-linear-gradient(#888 0 1px, transparent 1px 2px) center / 8px 8px no-repeat, #eaedf2;
    border: 1px solid #8a919c;
}
.out-scroll .thumb {
    margin-top: 112px;
}
.find-scroll .down {
    margin-top: 30px;
}
.browser {
    flex: 1;
    min-height: 0;
    display: flex;
    border-top: 1px solid #b8bfc9;
}
.browser-main {
    flex: 1;
    min-width: 0;
    display: flex;
    flex-direction: column;
    padding: 2px 1px 0 2px;
    border-right: 1px solid #b8bfc9;
    border-bottom: 1px solid #b8bfc9;
}
.nav-row {
    display: flex;
    gap: 3px;
    padding-bottom: 3px;
}
.nav-row button {
    width: 30px;
    height: 26px;
    background-color: #efefef;
    border: 1px solid #cfd3d8;
}
.drives {
    flex: 6 1 0;
    min-height: 0;
    border: 1px solid #b8bfc9;
}
.drives li {
    padding-left: 1px;
}
.lower {
    flex: 5 1 0;
    min-height: 0;
    display: flex;
    gap: 1px;
    margin-top: 9px;
}
.finder {
    flex: 1;
    min-width: 0;
    display: flex;
    flex-direction: column;
    background-color: #dde1ea;
    border: 1px solid #b8bfc9;
    border-bottom: none;
}
.find-row {
    display: flex;
    gap: 3px;
    padding: 3px 2px;
    border-bottom: 1px solid #b8bfc9;
}
.find-row .combo, .find-row button {
    height: 26px;
}
.find-row button {
    width: 38px;
    background-color: #fcfcfc;
    border: 1px solid #b8bfc9;
}
.find-row .thumbs {
    width: 42px;
    gap: 6px;
}
.find-row + .boxed {
    margin-top: 2px;
    border-top: 1px solid #b8bfc9;
}
.grow {
    flex: 1;
}
.file-list {
    flex: 1;
    background-color: #fff;
    border-bottom: 1px solid #b8bfc9;
}
.obj-row {
    display: flex;
    align-items: center;
    gap: 4px;
    height: 28px;
    padding: 3px 2px 0 1px;
}
.obj-row .combo {
    height: 25px;
}
.side-tabs.end {
    width: 27px;
    padding: 0;
    border: none;
}

/* status bar */
.status {
    position: relative;
    display: flex;
    align-items: center;
    gap: 7px;
    height: 27px;
    padding-left: 6px;
}
.status-text {
    flex: 1;
    color: #333;
}
.status-sep {
    width: 1px;
    height: 24px;
    margin-right: 7px;
    background-color: #8f959c;
}
.status .hot {
    width: 22px;
    height: 20px;
}
.status-input {
    width: 348px;
    height: 22px;
    background-color: #fff;
    border: 1px solid #b8bfc9;
    border-right: none;
}
.watermark {
    position: absolute;
    right: 15px;
    top: 1px;
    color: #8f8f8f;
    font-family: "Liberation Sans", "Noto Sans CJK SC", sans-serif;
    font-size: 14px;
}
```
